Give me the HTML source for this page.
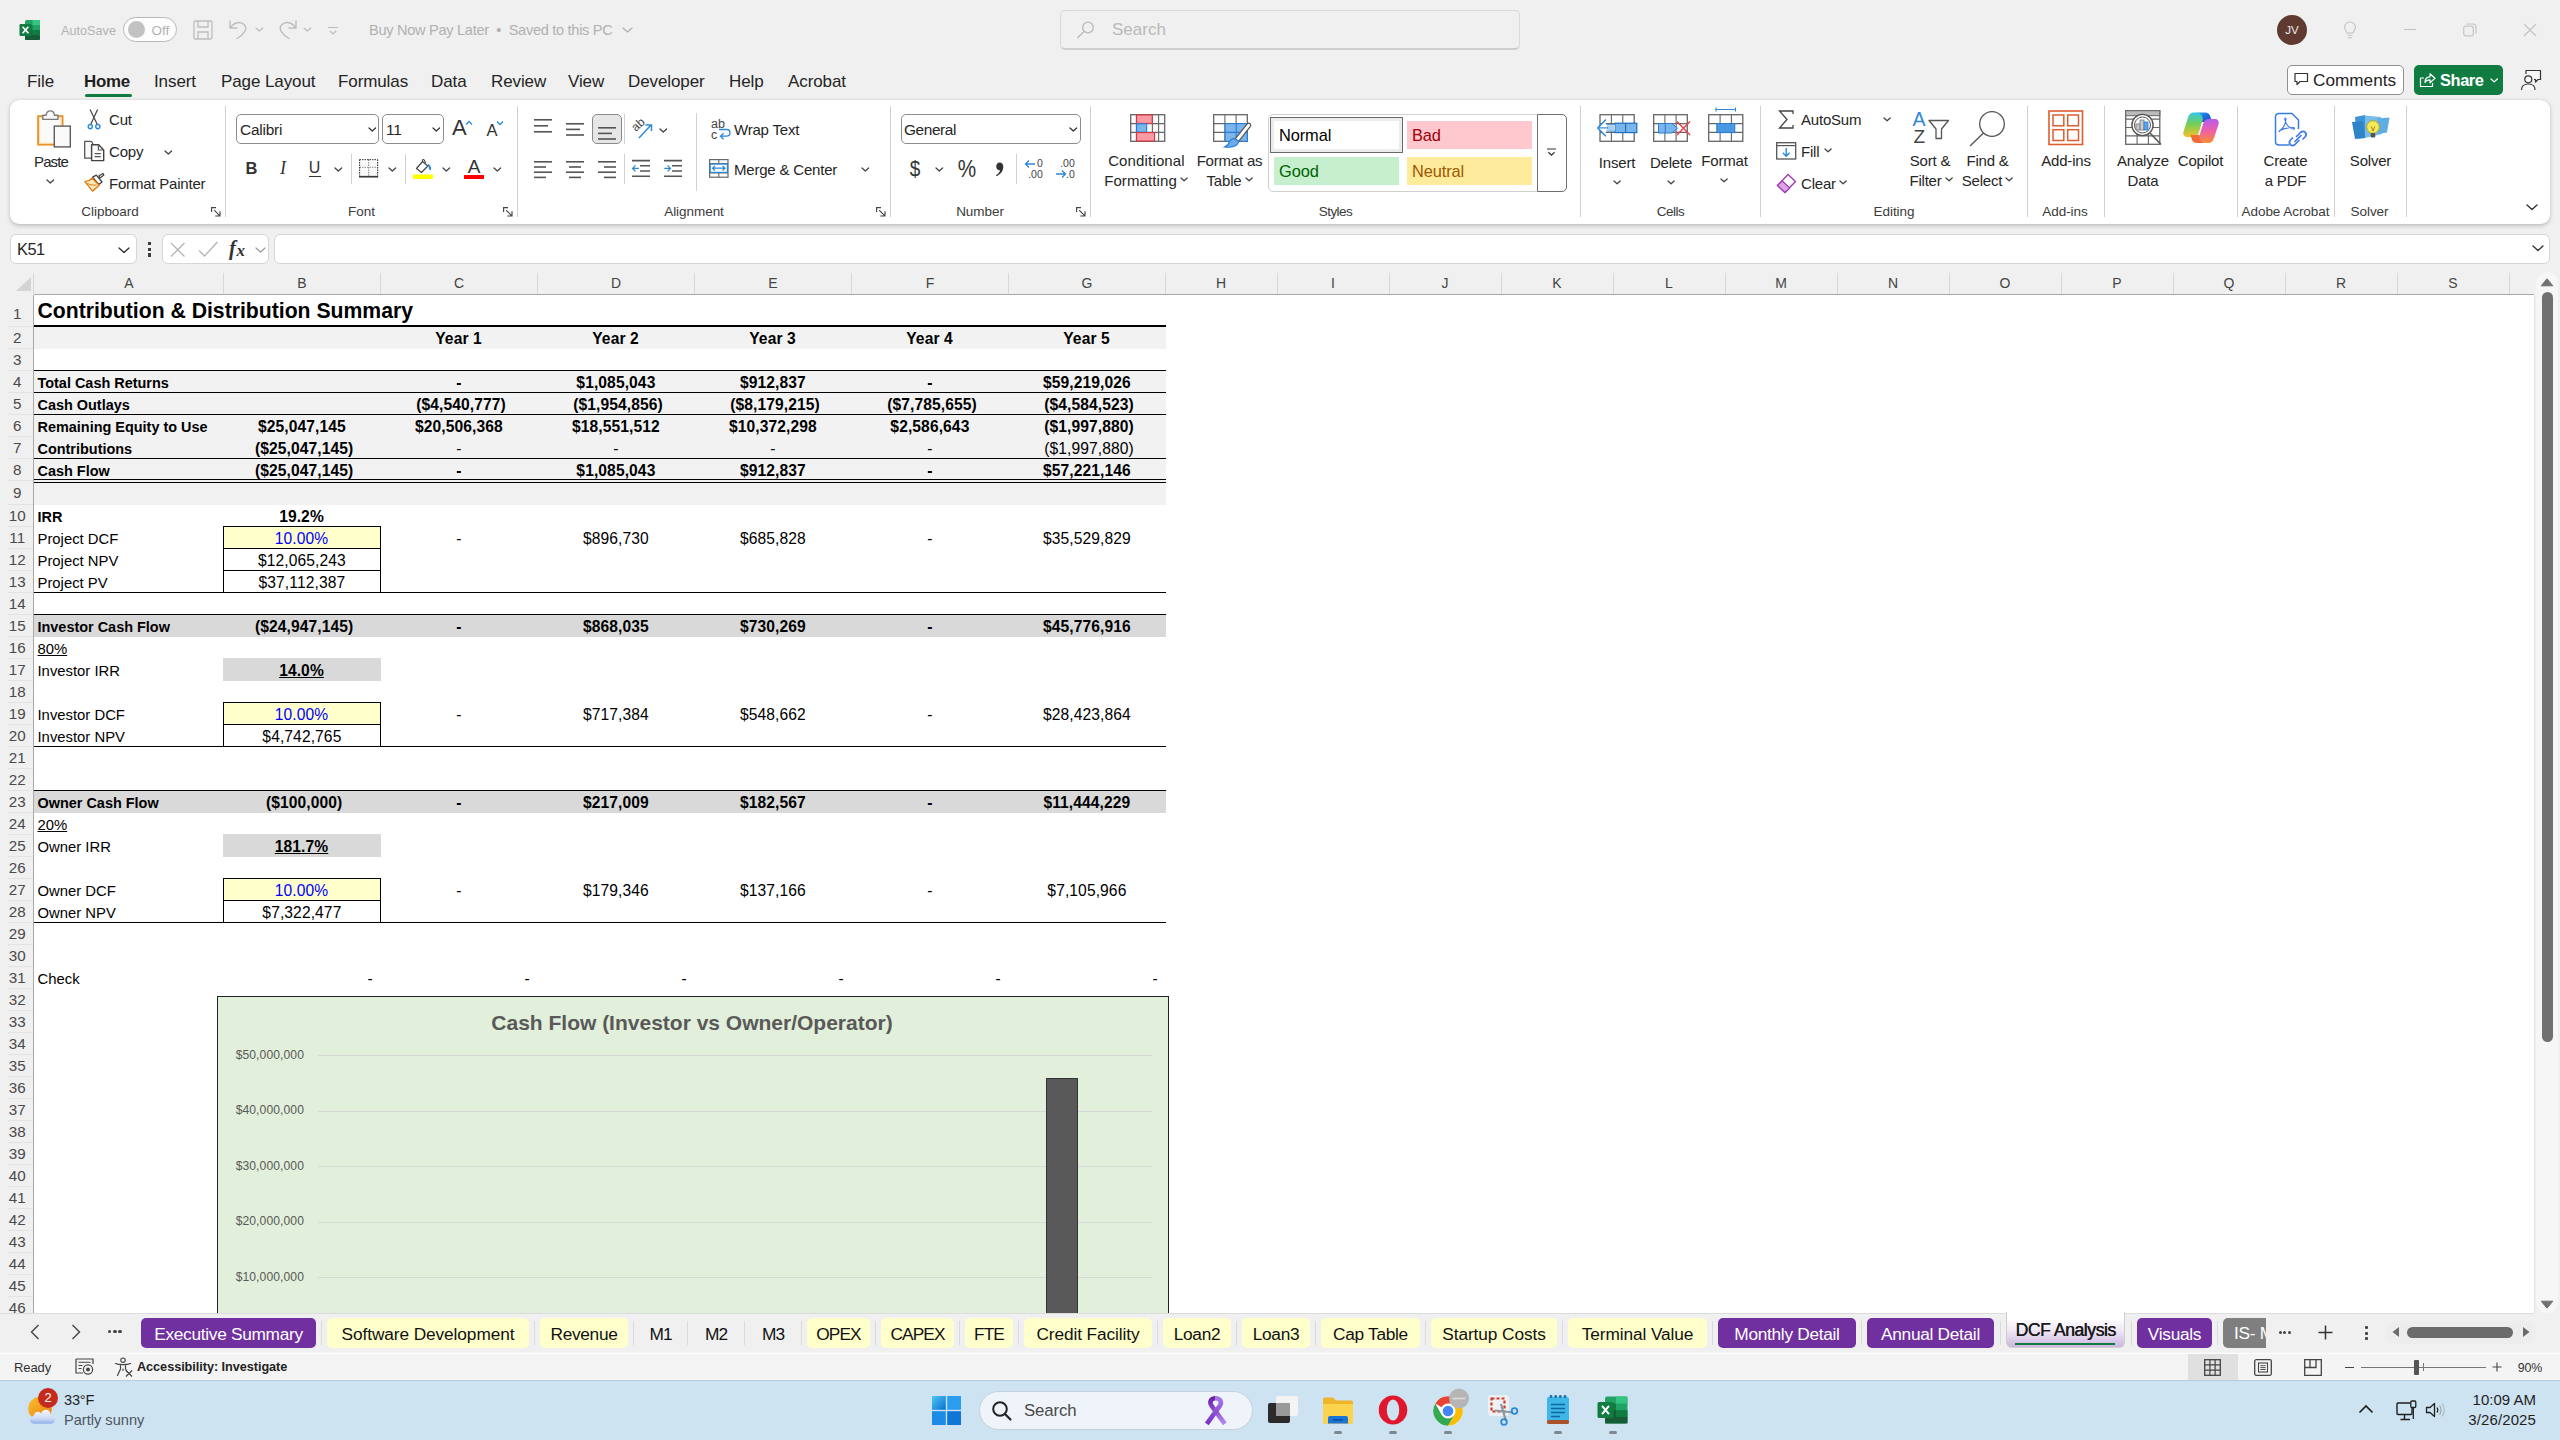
<!DOCTYPE html>
<html><head><meta charset="utf-8"><title>Excel</title>
<style>
html,body{margin:0;padding:0;}
body{width:2560px;height:1440px;overflow:hidden;background:#f0f0f0;font-family:"Liberation Sans",sans-serif;position:relative;}
body div,body svg{position:absolute;}
svg{overflow:visible;}
</style></head><body>
<div style="left:0px;top:272px;width:2534px;height:1041px;background:#fff;"></div>
<div style="left:0px;top:272px;width:2534px;height:22px;background:#f0f0f0;"></div>
<div style="left:34px;top:294px;width:2500px;height:1px;background:#a9a9a9;"></div>
<svg style="left:14px;top:276px;" width="18" height="16" viewBox="0 0 18 16"><path d="M17 1V15H2Z" fill="#d4d4d4"/></svg>
<div style="left:33px;top:273px;width:1px;height:21px;background:#d6d6d6;"></div>
<div style="top:273.3px;height:20px;line-height:20px;font-size:15.5px;color:#444;white-space:nowrap;left:98.5px;width:60px;text-align:center;transform:scaleX(.9);">A</div>
<div style="left:223px;top:273px;width:1px;height:21px;background:#d8d8d8;"></div>
<div style="top:273.3px;height:20px;line-height:20px;font-size:15.5px;color:#444;white-space:nowrap;left:271.5px;width:60px;text-align:center;transform:scaleX(.9);">B</div>
<div style="left:380px;top:273px;width:1px;height:21px;background:#d8d8d8;"></div>
<div style="top:273.3px;height:20px;line-height:20px;font-size:15.5px;color:#444;white-space:nowrap;left:428.5px;width:60px;text-align:center;transform:scaleX(.9);">C</div>
<div style="left:537px;top:273px;width:1px;height:21px;background:#d8d8d8;"></div>
<div style="top:273.3px;height:20px;line-height:20px;font-size:15.5px;color:#444;white-space:nowrap;left:585.5px;width:60px;text-align:center;transform:scaleX(.9);">D</div>
<div style="left:694px;top:273px;width:1px;height:21px;background:#d8d8d8;"></div>
<div style="top:273.3px;height:20px;line-height:20px;font-size:15.5px;color:#444;white-space:nowrap;left:742.5px;width:60px;text-align:center;transform:scaleX(.9);">E</div>
<div style="left:851px;top:273px;width:1px;height:21px;background:#d8d8d8;"></div>
<div style="top:273.3px;height:20px;line-height:20px;font-size:15.5px;color:#444;white-space:nowrap;left:899.5px;width:60px;text-align:center;transform:scaleX(.9);">F</div>
<div style="left:1008px;top:273px;width:1px;height:21px;background:#d8d8d8;"></div>
<div style="top:273.3px;height:20px;line-height:20px;font-size:15.5px;color:#444;white-space:nowrap;left:1056.5px;width:60px;text-align:center;transform:scaleX(.9);">G</div>
<div style="left:1165px;top:273px;width:1px;height:21px;background:#d8d8d8;"></div>
<div style="top:273.3px;height:20px;line-height:20px;font-size:15.5px;color:#444;white-space:nowrap;left:1191.0px;width:60px;text-align:center;transform:scaleX(.9);">H</div>
<div style="left:1277px;top:273px;width:1px;height:21px;background:#d8d8d8;"></div>
<div style="top:273.3px;height:20px;line-height:20px;font-size:15.5px;color:#444;white-space:nowrap;left:1303.0px;width:60px;text-align:center;transform:scaleX(.9);">I</div>
<div style="left:1389px;top:273px;width:1px;height:21px;background:#d8d8d8;"></div>
<div style="top:273.3px;height:20px;line-height:20px;font-size:15.5px;color:#444;white-space:nowrap;left:1415.0px;width:60px;text-align:center;transform:scaleX(.9);">J</div>
<div style="left:1501px;top:273px;width:1px;height:21px;background:#d8d8d8;"></div>
<div style="top:273.3px;height:20px;line-height:20px;font-size:15.5px;color:#444;white-space:nowrap;left:1527.0px;width:60px;text-align:center;transform:scaleX(.9);">K</div>
<div style="left:1613px;top:273px;width:1px;height:21px;background:#d8d8d8;"></div>
<div style="top:273.3px;height:20px;line-height:20px;font-size:15.5px;color:#444;white-space:nowrap;left:1639.0px;width:60px;text-align:center;transform:scaleX(.9);">L</div>
<div style="left:1725px;top:273px;width:1px;height:21px;background:#d8d8d8;"></div>
<div style="top:273.3px;height:20px;line-height:20px;font-size:15.5px;color:#444;white-space:nowrap;left:1751.0px;width:60px;text-align:center;transform:scaleX(.9);">M</div>
<div style="left:1837px;top:273px;width:1px;height:21px;background:#d8d8d8;"></div>
<div style="top:273.3px;height:20px;line-height:20px;font-size:15.5px;color:#444;white-space:nowrap;left:1863.0px;width:60px;text-align:center;transform:scaleX(.9);">N</div>
<div style="left:1949px;top:273px;width:1px;height:21px;background:#d8d8d8;"></div>
<div style="top:273.3px;height:20px;line-height:20px;font-size:15.5px;color:#444;white-space:nowrap;left:1975.0px;width:60px;text-align:center;transform:scaleX(.9);">O</div>
<div style="left:2061px;top:273px;width:1px;height:21px;background:#d8d8d8;"></div>
<div style="top:273.3px;height:20px;line-height:20px;font-size:15.5px;color:#444;white-space:nowrap;left:2087.0px;width:60px;text-align:center;transform:scaleX(.9);">P</div>
<div style="left:2173px;top:273px;width:1px;height:21px;background:#d8d8d8;"></div>
<div style="top:273.3px;height:20px;line-height:20px;font-size:15.5px;color:#444;white-space:nowrap;left:2199.0px;width:60px;text-align:center;transform:scaleX(.9);">Q</div>
<div style="left:2285px;top:273px;width:1px;height:21px;background:#d8d8d8;"></div>
<div style="top:273.3px;height:20px;line-height:20px;font-size:15.5px;color:#444;white-space:nowrap;left:2311.0px;width:60px;text-align:center;transform:scaleX(.9);">R</div>
<div style="left:2397px;top:273px;width:1px;height:21px;background:#d8d8d8;"></div>
<div style="top:273.3px;height:20px;line-height:20px;font-size:15.5px;color:#444;white-space:nowrap;left:2423.0px;width:60px;text-align:center;transform:scaleX(.9);">S</div>
<div style="left:2509px;top:273px;width:1px;height:21px;background:#d8d8d8;"></div>
<div style="left:0px;top:294px;width:33px;height:1019px;background:#f0f0f0;"></div>
<div style="left:33px;top:295px;width:1px;height:1018px;background:#a9a9a9;"></div>
<div style="top:303.8px;height:20px;line-height:20px;font-size:15.2px;color:#4a4a4a;white-space:nowrap;letter-spacing:0.2px;left:-2.6999999999999993px;width:40px;text-align:center;">1</div>
<div style="left:8px;top:326px;width:25px;height:1px;background:#e3e3e3;"></div>
<div style="top:328.3px;height:20px;line-height:20px;font-size:15.2px;color:#4a4a4a;white-space:nowrap;letter-spacing:0.2px;left:-2.6999999999999993px;width:40px;text-align:center;">2</div>
<div style="left:8px;top:348px;width:25px;height:1px;background:#e3e3e3;"></div>
<div style="top:350.3px;height:20px;line-height:20px;font-size:15.2px;color:#4a4a4a;white-space:nowrap;letter-spacing:0.2px;left:-2.6999999999999993px;width:40px;text-align:center;">3</div>
<div style="left:8px;top:370px;width:25px;height:1px;background:#e3e3e3;"></div>
<div style="top:372.3px;height:20px;line-height:20px;font-size:15.2px;color:#4a4a4a;white-space:nowrap;letter-spacing:0.2px;left:-2.6999999999999993px;width:40px;text-align:center;">4</div>
<div style="left:8px;top:392px;width:25px;height:1px;background:#e3e3e3;"></div>
<div style="top:394.3px;height:20px;line-height:20px;font-size:15.2px;color:#4a4a4a;white-space:nowrap;letter-spacing:0.2px;left:-2.6999999999999993px;width:40px;text-align:center;">5</div>
<div style="left:8px;top:414px;width:25px;height:1px;background:#e3e3e3;"></div>
<div style="top:416.3px;height:20px;line-height:20px;font-size:15.2px;color:#4a4a4a;white-space:nowrap;letter-spacing:0.2px;left:-2.6999999999999993px;width:40px;text-align:center;">6</div>
<div style="left:8px;top:436px;width:25px;height:1px;background:#e3e3e3;"></div>
<div style="top:438.3px;height:20px;line-height:20px;font-size:15.2px;color:#4a4a4a;white-space:nowrap;letter-spacing:0.2px;left:-2.6999999999999993px;width:40px;text-align:center;">7</div>
<div style="left:8px;top:458px;width:25px;height:1px;background:#e3e3e3;"></div>
<div style="top:460.3px;height:20px;line-height:20px;font-size:15.2px;color:#4a4a4a;white-space:nowrap;letter-spacing:0.2px;left:-2.6999999999999993px;width:40px;text-align:center;">8</div>
<div style="left:8px;top:480px;width:25px;height:1px;background:#e3e3e3;"></div>
<div style="top:483.3px;height:20px;line-height:20px;font-size:15.2px;color:#4a4a4a;white-space:nowrap;letter-spacing:0.2px;left:-2.6999999999999993px;width:40px;text-align:center;">9</div>
<div style="left:8px;top:504px;width:25px;height:1px;background:#e3e3e3;"></div>
<div style="top:506.3px;height:20px;line-height:20px;font-size:15.2px;color:#4a4a4a;white-space:nowrap;letter-spacing:0.2px;left:-2.6999999999999993px;width:40px;text-align:center;">10</div>
<div style="left:8px;top:526px;width:25px;height:1px;background:#e3e3e3;"></div>
<div style="top:528.3px;height:20px;line-height:20px;font-size:15.2px;color:#4a4a4a;white-space:nowrap;letter-spacing:0.2px;left:-2.6999999999999993px;width:40px;text-align:center;">11</div>
<div style="left:8px;top:548px;width:25px;height:1px;background:#e3e3e3;"></div>
<div style="top:550.3px;height:20px;line-height:20px;font-size:15.2px;color:#4a4a4a;white-space:nowrap;letter-spacing:0.2px;left:-2.6999999999999993px;width:40px;text-align:center;">12</div>
<div style="left:8px;top:570px;width:25px;height:1px;background:#e3e3e3;"></div>
<div style="top:572.3px;height:20px;line-height:20px;font-size:15.2px;color:#4a4a4a;white-space:nowrap;letter-spacing:0.2px;left:-2.6999999999999993px;width:40px;text-align:center;">13</div>
<div style="left:8px;top:592px;width:25px;height:1px;background:#e3e3e3;"></div>
<div style="top:594.3px;height:20px;line-height:20px;font-size:15.2px;color:#4a4a4a;white-space:nowrap;letter-spacing:0.2px;left:-2.6999999999999993px;width:40px;text-align:center;">14</div>
<div style="left:8px;top:614px;width:25px;height:1px;background:#e3e3e3;"></div>
<div style="top:616.3px;height:20px;line-height:20px;font-size:15.2px;color:#4a4a4a;white-space:nowrap;letter-spacing:0.2px;left:-2.6999999999999993px;width:40px;text-align:center;">15</div>
<div style="left:8px;top:636px;width:25px;height:1px;background:#e3e3e3;"></div>
<div style="top:638.3px;height:20px;line-height:20px;font-size:15.2px;color:#4a4a4a;white-space:nowrap;letter-spacing:0.2px;left:-2.6999999999999993px;width:40px;text-align:center;">16</div>
<div style="left:8px;top:658px;width:25px;height:1px;background:#e3e3e3;"></div>
<div style="top:660.3px;height:20px;line-height:20px;font-size:15.2px;color:#4a4a4a;white-space:nowrap;letter-spacing:0.2px;left:-2.6999999999999993px;width:40px;text-align:center;">17</div>
<div style="left:8px;top:680px;width:25px;height:1px;background:#e3e3e3;"></div>
<div style="top:682.3px;height:20px;line-height:20px;font-size:15.2px;color:#4a4a4a;white-space:nowrap;letter-spacing:0.2px;left:-2.6999999999999993px;width:40px;text-align:center;">18</div>
<div style="left:8px;top:702px;width:25px;height:1px;background:#e3e3e3;"></div>
<div style="top:704.3px;height:20px;line-height:20px;font-size:15.2px;color:#4a4a4a;white-space:nowrap;letter-spacing:0.2px;left:-2.6999999999999993px;width:40px;text-align:center;">19</div>
<div style="left:8px;top:724px;width:25px;height:1px;background:#e3e3e3;"></div>
<div style="top:726.3px;height:20px;line-height:20px;font-size:15.2px;color:#4a4a4a;white-space:nowrap;letter-spacing:0.2px;left:-2.6999999999999993px;width:40px;text-align:center;">20</div>
<div style="left:8px;top:746px;width:25px;height:1px;background:#e3e3e3;"></div>
<div style="top:748.3px;height:20px;line-height:20px;font-size:15.2px;color:#4a4a4a;white-space:nowrap;letter-spacing:0.2px;left:-2.6999999999999993px;width:40px;text-align:center;">21</div>
<div style="left:8px;top:768px;width:25px;height:1px;background:#e3e3e3;"></div>
<div style="top:770.3px;height:20px;line-height:20px;font-size:15.2px;color:#4a4a4a;white-space:nowrap;letter-spacing:0.2px;left:-2.6999999999999993px;width:40px;text-align:center;">22</div>
<div style="left:8px;top:790px;width:25px;height:1px;background:#e3e3e3;"></div>
<div style="top:792.3px;height:20px;line-height:20px;font-size:15.2px;color:#4a4a4a;white-space:nowrap;letter-spacing:0.2px;left:-2.6999999999999993px;width:40px;text-align:center;">23</div>
<div style="left:8px;top:812px;width:25px;height:1px;background:#e3e3e3;"></div>
<div style="top:814.3px;height:20px;line-height:20px;font-size:15.2px;color:#4a4a4a;white-space:nowrap;letter-spacing:0.2px;left:-2.6999999999999993px;width:40px;text-align:center;">24</div>
<div style="left:8px;top:834px;width:25px;height:1px;background:#e3e3e3;"></div>
<div style="top:836.3px;height:20px;line-height:20px;font-size:15.2px;color:#4a4a4a;white-space:nowrap;letter-spacing:0.2px;left:-2.6999999999999993px;width:40px;text-align:center;">25</div>
<div style="left:8px;top:856px;width:25px;height:1px;background:#e3e3e3;"></div>
<div style="top:858.3px;height:20px;line-height:20px;font-size:15.2px;color:#4a4a4a;white-space:nowrap;letter-spacing:0.2px;left:-2.6999999999999993px;width:40px;text-align:center;">26</div>
<div style="left:8px;top:878px;width:25px;height:1px;background:#e3e3e3;"></div>
<div style="top:880.3px;height:20px;line-height:20px;font-size:15.2px;color:#4a4a4a;white-space:nowrap;letter-spacing:0.2px;left:-2.6999999999999993px;width:40px;text-align:center;">27</div>
<div style="left:8px;top:900px;width:25px;height:1px;background:#e3e3e3;"></div>
<div style="top:902.3px;height:20px;line-height:20px;font-size:15.2px;color:#4a4a4a;white-space:nowrap;letter-spacing:0.2px;left:-2.6999999999999993px;width:40px;text-align:center;">28</div>
<div style="left:8px;top:922px;width:25px;height:1px;background:#e3e3e3;"></div>
<div style="top:924.3px;height:20px;line-height:20px;font-size:15.2px;color:#4a4a4a;white-space:nowrap;letter-spacing:0.2px;left:-2.6999999999999993px;width:40px;text-align:center;">29</div>
<div style="left:8px;top:944px;width:25px;height:1px;background:#e3e3e3;"></div>
<div style="top:946.3px;height:20px;line-height:20px;font-size:15.2px;color:#4a4a4a;white-space:nowrap;letter-spacing:0.2px;left:-2.6999999999999993px;width:40px;text-align:center;">30</div>
<div style="left:8px;top:966px;width:25px;height:1px;background:#e3e3e3;"></div>
<div style="top:968.3px;height:20px;line-height:20px;font-size:15.2px;color:#4a4a4a;white-space:nowrap;letter-spacing:0.2px;left:-2.6999999999999993px;width:40px;text-align:center;">31</div>
<div style="left:8px;top:988px;width:25px;height:1px;background:#e3e3e3;"></div>
<div style="top:990.3px;height:20px;line-height:20px;font-size:15.2px;color:#4a4a4a;white-space:nowrap;letter-spacing:0.2px;left:-2.6999999999999993px;width:40px;text-align:center;">32</div>
<div style="left:8px;top:1010px;width:25px;height:1px;background:#e3e3e3;"></div>
<div style="top:1012.3px;height:20px;line-height:20px;font-size:15.2px;color:#4a4a4a;white-space:nowrap;letter-spacing:0.2px;left:-2.6999999999999993px;width:40px;text-align:center;">33</div>
<div style="left:8px;top:1032px;width:25px;height:1px;background:#e3e3e3;"></div>
<div style="top:1034.3px;height:20px;line-height:20px;font-size:15.2px;color:#4a4a4a;white-space:nowrap;letter-spacing:0.2px;left:-2.6999999999999993px;width:40px;text-align:center;">34</div>
<div style="left:8px;top:1054px;width:25px;height:1px;background:#e3e3e3;"></div>
<div style="top:1056.3px;height:20px;line-height:20px;font-size:15.2px;color:#4a4a4a;white-space:nowrap;letter-spacing:0.2px;left:-2.6999999999999993px;width:40px;text-align:center;">35</div>
<div style="left:8px;top:1076px;width:25px;height:1px;background:#e3e3e3;"></div>
<div style="top:1078.3px;height:20px;line-height:20px;font-size:15.2px;color:#4a4a4a;white-space:nowrap;letter-spacing:0.2px;left:-2.6999999999999993px;width:40px;text-align:center;">36</div>
<div style="left:8px;top:1098px;width:25px;height:1px;background:#e3e3e3;"></div>
<div style="top:1100.3px;height:20px;line-height:20px;font-size:15.2px;color:#4a4a4a;white-space:nowrap;letter-spacing:0.2px;left:-2.6999999999999993px;width:40px;text-align:center;">37</div>
<div style="left:8px;top:1120px;width:25px;height:1px;background:#e3e3e3;"></div>
<div style="top:1122.3px;height:20px;line-height:20px;font-size:15.2px;color:#4a4a4a;white-space:nowrap;letter-spacing:0.2px;left:-2.6999999999999993px;width:40px;text-align:center;">38</div>
<div style="left:8px;top:1142px;width:25px;height:1px;background:#e3e3e3;"></div>
<div style="top:1144.3px;height:20px;line-height:20px;font-size:15.2px;color:#4a4a4a;white-space:nowrap;letter-spacing:0.2px;left:-2.6999999999999993px;width:40px;text-align:center;">39</div>
<div style="left:8px;top:1164px;width:25px;height:1px;background:#e3e3e3;"></div>
<div style="top:1166.3px;height:20px;line-height:20px;font-size:15.2px;color:#4a4a4a;white-space:nowrap;letter-spacing:0.2px;left:-2.6999999999999993px;width:40px;text-align:center;">40</div>
<div style="left:8px;top:1186px;width:25px;height:1px;background:#e3e3e3;"></div>
<div style="top:1188.3px;height:20px;line-height:20px;font-size:15.2px;color:#4a4a4a;white-space:nowrap;letter-spacing:0.2px;left:-2.6999999999999993px;width:40px;text-align:center;">41</div>
<div style="left:8px;top:1208px;width:25px;height:1px;background:#e3e3e3;"></div>
<div style="top:1210.3px;height:20px;line-height:20px;font-size:15.2px;color:#4a4a4a;white-space:nowrap;letter-spacing:0.2px;left:-2.6999999999999993px;width:40px;text-align:center;">42</div>
<div style="left:8px;top:1230px;width:25px;height:1px;background:#e3e3e3;"></div>
<div style="top:1232.3px;height:20px;line-height:20px;font-size:15.2px;color:#4a4a4a;white-space:nowrap;letter-spacing:0.2px;left:-2.6999999999999993px;width:40px;text-align:center;">43</div>
<div style="left:8px;top:1252px;width:25px;height:1px;background:#e3e3e3;"></div>
<div style="top:1254.3px;height:20px;line-height:20px;font-size:15.2px;color:#4a4a4a;white-space:nowrap;letter-spacing:0.2px;left:-2.6999999999999993px;width:40px;text-align:center;">44</div>
<div style="left:8px;top:1274px;width:25px;height:1px;background:#e3e3e3;"></div>
<div style="top:1276.3px;height:20px;line-height:20px;font-size:15.2px;color:#4a4a4a;white-space:nowrap;letter-spacing:0.2px;left:-2.6999999999999993px;width:40px;text-align:center;">45</div>
<div style="left:8px;top:1296px;width:25px;height:1px;background:#e3e3e3;"></div>
<div style="top:1298.3px;height:20px;line-height:20px;font-size:15.2px;color:#4a4a4a;white-space:nowrap;letter-spacing:0.2px;left:-2.6999999999999993px;width:40px;text-align:center;">46</div>
<div style="left:2534px;top:272px;width:26px;height:1041px;background:#f0f0f0;"></div>
<div style="left:2534px;top:295px;width:1px;height:1018px;background:#e4e4e4;"></div>
<div style="left:2536px;top:272px;width:22px;height:1041px;background:#f6f6f6;border-radius:11px;"></div>
<svg style="left:2540px;top:277px;" width="14" height="10" viewBox="0 0 14 10"><path d="M1.2 8.8L7 1.8L12.8 8.8Z" fill="#707070" stroke="#707070" stroke-width="1" stroke-linejoin="round"/></svg>
<svg style="left:2540px;top:1300px;" width="14" height="10" viewBox="0 0 14 10"><path d="M1.2 1.2L7 8.2L12.8 1.2Z" fill="#707070" stroke="#707070" stroke-width="1" stroke-linejoin="round"/></svg>
<div style="left:2542px;top:292px;width:11px;height:750px;background:#707070;border-radius:5.5px;"></div>
<div style="left:34px;top:326px;width:1132px;height:23px;background:#f2f2f2;"></div>
<div style="left:34px;top:370px;width:1132px;height:135px;background:#f2f2f2;"></div>
<div style="left:34px;top:614px;width:1132px;height:23px;background:#d9d9d9;"></div>
<div style="left:34px;top:790px;width:1132px;height:23px;background:#d9d9d9;"></div>
<div style="left:223px;top:658px;width:158px;height:23px;background:#d9d9d9;"></div>
<div style="left:223px;top:834px;width:158px;height:23px;background:#d9d9d9;"></div>
<div style="left:223px;top:526px;width:158px;height:23px;background:#ffffcc;"></div>
<div style="left:223px;top:702px;width:158px;height:23px;background:#ffffcc;"></div>
<div style="left:223px;top:878px;width:158px;height:23px;background:#ffffcc;"></div>
<div style="left:34px;top:325px;width:1132px;height:2px;background:#000;"></div>
<div style="left:34px;top:370px;width:1132px;height:1px;background:#000;"></div>
<div style="left:34px;top:392px;width:1132px;height:1px;background:#000;"></div>
<div style="left:34px;top:414px;width:1132px;height:1px;background:#000;"></div>
<div style="left:34px;top:458px;width:1132px;height:1px;background:#000;"></div>
<div style="left:34px;top:479px;width:1132px;height:1px;background:#000;"></div>
<div style="left:34px;top:482px;width:1132px;height:1px;background:#000;"></div>
<div style="left:34px;top:592px;width:1132px;height:1px;background:#000;"></div>
<div style="left:34px;top:614px;width:1132px;height:1px;background:#000;"></div>
<div style="left:34px;top:746px;width:1132px;height:1px;background:#000;"></div>
<div style="left:34px;top:790px;width:1132px;height:1px;background:#000;"></div>
<div style="left:34px;top:922px;width:1132px;height:1px;background:#000;"></div>
<div style="left:223px;top:526px;width:158px;height:67px;border:1px solid #000;box-sizing:border-box;"></div>
<div style="left:223px;top:548px;width:158px;height:1px;background:#000;"></div>
<div style="left:223px;top:570px;width:158px;height:1px;background:#000;"></div>
<div style="left:223px;top:702px;width:158px;height:45px;border:1px solid #000;box-sizing:border-box;"></div>
<div style="left:223px;top:724px;width:158px;height:1px;background:#000;"></div>
<div style="left:223px;top:878px;width:158px;height:45px;border:1px solid #000;box-sizing:border-box;"></div>
<div style="left:223px;top:900px;width:158px;height:1px;background:#000;"></div>
<div style="top:297.0px;height:28px;line-height:28px;font-size:21.2px;color:#000;white-space:nowrap;font-weight:700;left:37.5px;">Contribution &amp; Distribution Summary</div>
<div style="top:329.0px;height:20px;line-height:20px;font-size:15.6px;color:#000;white-space:nowrap;font-weight:700;letter-spacing:0.1px;left:158.5px;width:600px;text-align:center;">Year 1</div>
<div style="top:329.0px;height:20px;line-height:20px;font-size:15.6px;color:#000;white-space:nowrap;font-weight:700;letter-spacing:0.1px;left:315.5px;width:600px;text-align:center;">Year 2</div>
<div style="top:329.0px;height:20px;line-height:20px;font-size:15.6px;color:#000;white-space:nowrap;font-weight:700;letter-spacing:0.1px;left:472.5px;width:600px;text-align:center;">Year 3</div>
<div style="top:329.0px;height:20px;line-height:20px;font-size:15.6px;color:#000;white-space:nowrap;font-weight:700;letter-spacing:0.1px;left:629.5px;width:600px;text-align:center;">Year 4</div>
<div style="top:329.0px;height:20px;line-height:20px;font-size:15.6px;color:#000;white-space:nowrap;font-weight:700;letter-spacing:0.1px;left:786.5px;width:600px;text-align:center;">Year 5</div>
<div style="top:373.5px;height:19px;line-height:19px;font-size:14.45px;color:#000;white-space:nowrap;font-weight:700;left:37.5px;">Total Cash Returns</div>
<div style="top:373.0px;height:20px;line-height:20px;font-size:15.6px;color:#000;white-space:nowrap;font-weight:700;letter-spacing:0.1px;left:159.0px;width:600px;text-align:center;">-</div>
<div style="top:373.0px;height:20px;line-height:20px;font-size:15.6px;color:#000;white-space:nowrap;font-weight:700;letter-spacing:0.1px;left:315.9px;width:600px;text-align:center;">$1,085,043</div>
<div style="top:373.0px;height:20px;line-height:20px;font-size:15.6px;color:#000;white-space:nowrap;font-weight:700;letter-spacing:0.1px;left:472.9px;width:600px;text-align:center;">$912,837</div>
<div style="top:373.0px;height:20px;line-height:20px;font-size:15.6px;color:#000;white-space:nowrap;font-weight:700;letter-spacing:0.1px;left:630.0px;width:600px;text-align:center;">-</div>
<div style="top:373.0px;height:20px;line-height:20px;font-size:15.6px;color:#000;white-space:nowrap;font-weight:700;letter-spacing:0.1px;left:786.9000000000001px;width:600px;text-align:center;">$59,219,026</div>
<div style="top:395.5px;height:19px;line-height:19px;font-size:14.45px;color:#000;white-space:nowrap;font-weight:700;left:37.5px;">Cash Outlays</div>
<div style="top:395.0px;height:20px;line-height:20px;font-size:15.6px;color:#000;white-space:nowrap;font-weight:700;letter-spacing:0.1px;left:161.10000000000002px;width:600px;text-align:center;">($4,540,777)</div>
<div style="top:395.0px;height:20px;line-height:20px;font-size:15.6px;color:#000;white-space:nowrap;font-weight:700;letter-spacing:0.1px;left:318.1px;width:600px;text-align:center;">($1,954,856)</div>
<div style="top:395.0px;height:20px;line-height:20px;font-size:15.6px;color:#000;white-space:nowrap;font-weight:700;letter-spacing:0.1px;left:475.1px;width:600px;text-align:center;">($8,179,215)</div>
<div style="top:395.0px;height:20px;line-height:20px;font-size:15.6px;color:#000;white-space:nowrap;font-weight:700;letter-spacing:0.1px;left:632.1px;width:600px;text-align:center;">($7,785,655)</div>
<div style="top:395.0px;height:20px;line-height:20px;font-size:15.6px;color:#000;white-space:nowrap;font-weight:700;letter-spacing:0.1px;left:789.0999999999999px;width:600px;text-align:center;">($4,584,523)</div>
<div style="top:417.5px;height:19px;line-height:19px;font-size:14.45px;color:#000;white-space:nowrap;font-weight:700;left:37.5px;">Remaining Equity to Use</div>
<div style="top:417.0px;height:20px;line-height:20px;font-size:15.6px;color:#000;white-space:nowrap;font-weight:700;letter-spacing:0.1px;left:1.8999999999999773px;width:600px;text-align:center;">$25,047,145</div>
<div style="top:417.0px;height:20px;line-height:20px;font-size:15.6px;color:#000;white-space:nowrap;font-weight:700;letter-spacing:0.1px;left:158.89999999999998px;width:600px;text-align:center;">$20,506,368</div>
<div style="top:417.0px;height:20px;line-height:20px;font-size:15.6px;color:#000;white-space:nowrap;font-weight:700;letter-spacing:0.1px;left:315.9px;width:600px;text-align:center;">$18,551,512</div>
<div style="top:417.0px;height:20px;line-height:20px;font-size:15.6px;color:#000;white-space:nowrap;font-weight:700;letter-spacing:0.1px;left:472.9px;width:600px;text-align:center;">$10,372,298</div>
<div style="top:417.0px;height:20px;line-height:20px;font-size:15.6px;color:#000;white-space:nowrap;font-weight:700;letter-spacing:0.1px;left:629.9px;width:600px;text-align:center;">$2,586,643</div>
<div style="top:417.0px;height:20px;line-height:20px;font-size:15.6px;color:#000;white-space:nowrap;font-weight:700;letter-spacing:0.1px;left:789.0999999999999px;width:600px;text-align:center;">($1,997,880)</div>
<div style="top:439.5px;height:19px;line-height:19px;font-size:14.45px;color:#000;white-space:nowrap;font-weight:700;left:37.5px;">Contributions</div>
<div style="top:439.0px;height:20px;line-height:20px;font-size:15.6px;color:#000;white-space:nowrap;font-weight:700;letter-spacing:0.1px;left:4.100000000000023px;width:600px;text-align:center;">($25,047,145)</div>
<div style="top:439.0px;height:20px;line-height:20px;font-size:15.6px;color:#000;white-space:nowrap;letter-spacing:0.1px;left:159.0px;width:600px;text-align:center;">-</div>
<div style="top:439.0px;height:20px;line-height:20px;font-size:15.6px;color:#000;white-space:nowrap;letter-spacing:0.1px;left:316.0px;width:600px;text-align:center;">-</div>
<div style="top:439.0px;height:20px;line-height:20px;font-size:15.6px;color:#000;white-space:nowrap;letter-spacing:0.1px;left:473.0px;width:600px;text-align:center;">-</div>
<div style="top:439.0px;height:20px;line-height:20px;font-size:15.6px;color:#000;white-space:nowrap;letter-spacing:0.1px;left:630.0px;width:600px;text-align:center;">-</div>
<div style="top:439.0px;height:20px;line-height:20px;font-size:15.6px;color:#000;white-space:nowrap;letter-spacing:0.1px;left:789.0999999999999px;width:600px;text-align:center;">($1,997,880)</div>
<div style="top:461.5px;height:19px;line-height:19px;font-size:14.45px;color:#000;white-space:nowrap;font-weight:700;left:37.5px;">Cash Flow</div>
<div style="top:461.0px;height:20px;line-height:20px;font-size:15.6px;color:#000;white-space:nowrap;font-weight:700;letter-spacing:0.1px;left:4.100000000000023px;width:600px;text-align:center;">($25,047,145)</div>
<div style="top:461.0px;height:20px;line-height:20px;font-size:15.6px;color:#000;white-space:nowrap;font-weight:700;letter-spacing:0.1px;left:159.0px;width:600px;text-align:center;">-</div>
<div style="top:461.0px;height:20px;line-height:20px;font-size:15.6px;color:#000;white-space:nowrap;font-weight:700;letter-spacing:0.1px;left:315.9px;width:600px;text-align:center;">$1,085,043</div>
<div style="top:461.0px;height:20px;line-height:20px;font-size:15.6px;color:#000;white-space:nowrap;font-weight:700;letter-spacing:0.1px;left:472.9px;width:600px;text-align:center;">$912,837</div>
<div style="top:461.0px;height:20px;line-height:20px;font-size:15.6px;color:#000;white-space:nowrap;font-weight:700;letter-spacing:0.1px;left:630.0px;width:600px;text-align:center;">-</div>
<div style="top:461.0px;height:20px;line-height:20px;font-size:15.6px;color:#000;white-space:nowrap;font-weight:700;letter-spacing:0.1px;left:786.9000000000001px;width:600px;text-align:center;">$57,221,146</div>
<div style="top:507.5px;height:19px;line-height:19px;font-size:14.45px;color:#000;white-space:nowrap;font-weight:700;left:37.5px;">IRR</div>
<div style="top:507.0px;height:20px;line-height:20px;font-size:15.6px;color:#000;white-space:nowrap;font-weight:700;letter-spacing:0.1px;left:1.5px;width:600px;text-align:center;">19.2%</div>
<div style="top:529.5px;height:19px;line-height:19px;font-size:14.85px;color:#000;white-space:nowrap;left:37.5px;">Project DCF</div>
<div style="top:529.0px;height:20px;line-height:20px;font-size:15.6px;color:#0000ff;white-space:nowrap;letter-spacing:0.1px;left:1.5px;width:600px;text-align:center;">10.00%</div>
<div style="top:529.0px;height:20px;line-height:20px;font-size:15.6px;color:#000;white-space:nowrap;letter-spacing:0.1px;left:159.0px;width:600px;text-align:center;">-</div>
<div style="top:529.0px;height:20px;line-height:20px;font-size:15.6px;color:#000;white-space:nowrap;letter-spacing:0.1px;left:315.9px;width:600px;text-align:center;">$896,730</div>
<div style="top:529.0px;height:20px;line-height:20px;font-size:15.6px;color:#000;white-space:nowrap;letter-spacing:0.1px;left:472.9px;width:600px;text-align:center;">$685,828</div>
<div style="top:529.0px;height:20px;line-height:20px;font-size:15.6px;color:#000;white-space:nowrap;letter-spacing:0.1px;left:630.0px;width:600px;text-align:center;">-</div>
<div style="top:529.0px;height:20px;line-height:20px;font-size:15.6px;color:#000;white-space:nowrap;letter-spacing:0.1px;left:786.9000000000001px;width:600px;text-align:center;">$35,529,829</div>
<div style="top:551.5px;height:19px;line-height:19px;font-size:14.85px;color:#000;white-space:nowrap;left:37.5px;">Project NPV</div>
<div style="top:551.0px;height:20px;line-height:20px;font-size:15.6px;color:#000;white-space:nowrap;letter-spacing:0.1px;left:1.8999999999999773px;width:600px;text-align:center;">$12,065,243</div>
<div style="top:573.5px;height:19px;line-height:19px;font-size:14.85px;color:#000;white-space:nowrap;left:37.5px;">Project PV</div>
<div style="top:573.0px;height:20px;line-height:20px;font-size:15.6px;color:#000;white-space:nowrap;letter-spacing:0.1px;left:1.8999999999999773px;width:600px;text-align:center;">$37,112,387</div>
<div style="top:617.5px;height:19px;line-height:19px;font-size:14.45px;color:#000;white-space:nowrap;font-weight:700;left:37.5px;">Investor Cash Flow</div>
<div style="top:617.0px;height:20px;line-height:20px;font-size:15.6px;color:#000;white-space:nowrap;font-weight:700;letter-spacing:0.1px;left:4.100000000000023px;width:600px;text-align:center;">($24,947,145)</div>
<div style="top:617.0px;height:20px;line-height:20px;font-size:15.6px;color:#000;white-space:nowrap;font-weight:700;letter-spacing:0.1px;left:159.0px;width:600px;text-align:center;">-</div>
<div style="top:617.0px;height:20px;line-height:20px;font-size:15.6px;color:#000;white-space:nowrap;font-weight:700;letter-spacing:0.1px;left:315.9px;width:600px;text-align:center;">$868,035</div>
<div style="top:617.0px;height:20px;line-height:20px;font-size:15.6px;color:#000;white-space:nowrap;font-weight:700;letter-spacing:0.1px;left:472.9px;width:600px;text-align:center;">$730,269</div>
<div style="top:617.0px;height:20px;line-height:20px;font-size:15.6px;color:#000;white-space:nowrap;font-weight:700;letter-spacing:0.1px;left:630.0px;width:600px;text-align:center;">-</div>
<div style="top:617.0px;height:20px;line-height:20px;font-size:15.6px;color:#000;white-space:nowrap;font-weight:700;letter-spacing:0.1px;left:786.9000000000001px;width:600px;text-align:center;">$45,776,916</div>
<div style="top:661.5px;height:19px;line-height:19px;font-size:14.85px;color:#000;white-space:nowrap;left:37.5px;">Investor IRR</div>
<div style="top:661.0px;height:20px;line-height:20px;font-size:15.6px;color:#000;white-space:nowrap;font-weight:700;letter-spacing:0.1px;left:1.5px;width:600px;text-align:center;text-decoration:underline;">14.0%</div>
<div style="top:705.5px;height:19px;line-height:19px;font-size:14.85px;color:#000;white-space:nowrap;left:37.5px;">Investor DCF</div>
<div style="top:705.0px;height:20px;line-height:20px;font-size:15.6px;color:#0000ff;white-space:nowrap;letter-spacing:0.1px;left:1.5px;width:600px;text-align:center;">10.00%</div>
<div style="top:705.0px;height:20px;line-height:20px;font-size:15.6px;color:#000;white-space:nowrap;letter-spacing:0.1px;left:159.0px;width:600px;text-align:center;">-</div>
<div style="top:705.0px;height:20px;line-height:20px;font-size:15.6px;color:#000;white-space:nowrap;letter-spacing:0.1px;left:315.9px;width:600px;text-align:center;">$717,384</div>
<div style="top:705.0px;height:20px;line-height:20px;font-size:15.6px;color:#000;white-space:nowrap;letter-spacing:0.1px;left:472.9px;width:600px;text-align:center;">$548,662</div>
<div style="top:705.0px;height:20px;line-height:20px;font-size:15.6px;color:#000;white-space:nowrap;letter-spacing:0.1px;left:630.0px;width:600px;text-align:center;">-</div>
<div style="top:705.0px;height:20px;line-height:20px;font-size:15.6px;color:#000;white-space:nowrap;letter-spacing:0.1px;left:786.9000000000001px;width:600px;text-align:center;">$28,423,864</div>
<div style="top:727.5px;height:19px;line-height:19px;font-size:14.85px;color:#000;white-space:nowrap;left:37.5px;">Investor NPV</div>
<div style="top:727.0px;height:20px;line-height:20px;font-size:15.6px;color:#000;white-space:nowrap;letter-spacing:0.1px;left:1.8999999999999773px;width:600px;text-align:center;">$4,742,765</div>
<div style="top:793.5px;height:19px;line-height:19px;font-size:14.45px;color:#000;white-space:nowrap;font-weight:700;left:37.5px;">Owner Cash Flow</div>
<div style="top:793.0px;height:20px;line-height:20px;font-size:15.6px;color:#000;white-space:nowrap;font-weight:700;letter-spacing:0.1px;left:4.100000000000023px;width:600px;text-align:center;">($100,000)</div>
<div style="top:793.0px;height:20px;line-height:20px;font-size:15.6px;color:#000;white-space:nowrap;font-weight:700;letter-spacing:0.1px;left:159.0px;width:600px;text-align:center;">-</div>
<div style="top:793.0px;height:20px;line-height:20px;font-size:15.6px;color:#000;white-space:nowrap;font-weight:700;letter-spacing:0.1px;left:315.9px;width:600px;text-align:center;">$217,009</div>
<div style="top:793.0px;height:20px;line-height:20px;font-size:15.6px;color:#000;white-space:nowrap;font-weight:700;letter-spacing:0.1px;left:472.9px;width:600px;text-align:center;">$182,567</div>
<div style="top:793.0px;height:20px;line-height:20px;font-size:15.6px;color:#000;white-space:nowrap;font-weight:700;letter-spacing:0.1px;left:630.0px;width:600px;text-align:center;">-</div>
<div style="top:793.0px;height:20px;line-height:20px;font-size:15.6px;color:#000;white-space:nowrap;font-weight:700;letter-spacing:0.1px;left:786.9000000000001px;width:600px;text-align:center;">$11,444,229</div>
<div style="top:837.5px;height:19px;line-height:19px;font-size:14.85px;color:#000;white-space:nowrap;left:37.5px;">Owner IRR</div>
<div style="top:837.0px;height:20px;line-height:20px;font-size:15.6px;color:#000;white-space:nowrap;font-weight:700;letter-spacing:0.1px;left:1.5px;width:600px;text-align:center;text-decoration:underline;">181.7%</div>
<div style="top:881.5px;height:19px;line-height:19px;font-size:14.85px;color:#000;white-space:nowrap;left:37.5px;">Owner DCF</div>
<div style="top:881.0px;height:20px;line-height:20px;font-size:15.6px;color:#0000ff;white-space:nowrap;letter-spacing:0.1px;left:1.5px;width:600px;text-align:center;">10.00%</div>
<div style="top:881.0px;height:20px;line-height:20px;font-size:15.6px;color:#000;white-space:nowrap;letter-spacing:0.1px;left:159.0px;width:600px;text-align:center;">-</div>
<div style="top:881.0px;height:20px;line-height:20px;font-size:15.6px;color:#000;white-space:nowrap;letter-spacing:0.1px;left:315.9px;width:600px;text-align:center;">$179,346</div>
<div style="top:881.0px;height:20px;line-height:20px;font-size:15.6px;color:#000;white-space:nowrap;letter-spacing:0.1px;left:472.9px;width:600px;text-align:center;">$137,166</div>
<div style="top:881.0px;height:20px;line-height:20px;font-size:15.6px;color:#000;white-space:nowrap;letter-spacing:0.1px;left:630.0px;width:600px;text-align:center;">-</div>
<div style="top:881.0px;height:20px;line-height:20px;font-size:15.6px;color:#000;white-space:nowrap;letter-spacing:0.1px;left:786.9000000000001px;width:600px;text-align:center;">$7,105,966</div>
<div style="top:903.5px;height:19px;line-height:19px;font-size:14.85px;color:#000;white-space:nowrap;left:37.5px;">Owner NPV</div>
<div style="top:903.0px;height:20px;line-height:20px;font-size:15.6px;color:#000;white-space:nowrap;letter-spacing:0.1px;left:1.8999999999999773px;width:600px;text-align:center;">$7,322,477</div>
<div style="top:639.5px;height:19px;line-height:19px;font-size:14.85px;color:#000;white-space:nowrap;left:37.5px;text-decoration:underline;">80%</div>
<div style="top:815.5px;height:19px;line-height:19px;font-size:14.85px;color:#000;white-space:nowrap;left:37.5px;text-decoration:underline;">20%</div>
<div style="top:969.5px;height:19px;line-height:19px;font-size:14.85px;color:#000;white-space:nowrap;left:37.5px;">Check</div>
<div style="top:969.0px;height:20px;line-height:20px;font-size:15.6px;color:#000;white-space:nowrap;left:70.0px;width:600px;text-align:center;">-</div>
<div style="top:969.0px;height:20px;line-height:20px;font-size:15.6px;color:#000;white-space:nowrap;left:227.0px;width:600px;text-align:center;">-</div>
<div style="top:969.0px;height:20px;line-height:20px;font-size:15.6px;color:#000;white-space:nowrap;left:384.0px;width:600px;text-align:center;">-</div>
<div style="top:969.0px;height:20px;line-height:20px;font-size:15.6px;color:#000;white-space:nowrap;left:541.0px;width:600px;text-align:center;">-</div>
<div style="top:969.0px;height:20px;line-height:20px;font-size:15.6px;color:#000;white-space:nowrap;left:698.0px;width:600px;text-align:center;">-</div>
<div style="top:969.0px;height:20px;line-height:20px;font-size:15.6px;color:#000;white-space:nowrap;left:855.0px;width:600px;text-align:center;">-</div>
<div style="left:217px;top:996px;width:952px;height:330px;background:#e2efda;border:1px solid #222;box-sizing:border-box;"></div>
<div style="top:1009.0px;height:27px;line-height:27px;font-size:21px;color:#595959;white-space:nowrap;font-weight:700;left:242.0px;width:900px;text-align:center;">Cash Flow (Investor vs Owner/Operator)</div>
<div style="top:1046.5px;height:16px;line-height:16px;font-size:12.1px;color:#595959;white-space:nowrap;letter-spacing:0.1px;left:-296px;width:600px;text-align:right;">$50,000,000</div>
<div style="left:318px;top:1055px;width:834px;height:1px;background:#d5d7d8;"></div>
<div style="top:1102.0px;height:16px;line-height:16px;font-size:12.1px;color:#595959;white-space:nowrap;letter-spacing:0.1px;left:-296px;width:600px;text-align:right;">$40,000,000</div>
<div style="left:318px;top:1111px;width:834px;height:1px;background:#d5d7d8;"></div>
<div style="top:1157.6px;height:16px;line-height:16px;font-size:12.1px;color:#595959;white-space:nowrap;letter-spacing:0.1px;left:-296px;width:600px;text-align:right;">$30,000,000</div>
<div style="left:318px;top:1166px;width:834px;height:1px;background:#d5d7d8;"></div>
<div style="top:1213.2px;height:16px;line-height:16px;font-size:12.1px;color:#595959;white-space:nowrap;letter-spacing:0.1px;left:-296px;width:600px;text-align:right;">$20,000,000</div>
<div style="left:318px;top:1222px;width:834px;height:1px;background:#d5d7d8;"></div>
<div style="top:1268.7px;height:16px;line-height:16px;font-size:12.1px;color:#595959;white-space:nowrap;letter-spacing:0.1px;left:-296px;width:600px;text-align:right;">$10,000,000</div>
<div style="left:318px;top:1277px;width:834px;height:1px;background:#d5d7d8;"></div>
<div style="left:1046px;top:1078px;width:32px;height:240px;background:#595959;border:1px solid #333;box-sizing:border-box;"></div>
<svg style="left:19px;top:19px;" width="22" height="22" viewBox="0 0 22 22">
<rect x="6" y="1" width="15" height="20" rx="1.5" fill="#21a366"/>
<rect x="13.5" y="1" width="7.5" height="5" fill="#33c481"/>
<rect x="6" y="6" width="7.5" height="5" fill="#107c41"/>
<rect x="13.5" y="11" width="7.5" height="5" fill="#107c41"/>
<rect x="6" y="11" width="7.5" height="5" fill="#185c37"/>
<rect x="6" y="16" width="15" height="5" rx="1" fill="#185c37"/>
<rect x="0.5" y="5" width="12" height="12" rx="1.2" fill="#107c41"/>
<path d="M3.6 7.8L9.4 14.2M9.4 7.8L3.6 14.2" stroke="#fff" stroke-width="1.7"/></svg>
<div style="top:22.8px;height:17px;line-height:17px;font-size:12.7px;color:#b3b3b3;white-space:nowrap;left:61px;">AutoSave</div>
<div style="left:123px;top:17px;width:53.5px;height:25px;border:1px solid #b9b9b9;border-radius:12.5px;background:#fdfdfd;box-sizing:border-box;"></div>
<div style="left:127.5px;top:21px;width:17px;height:17px;border-radius:8.5px;background:#c2c2c2;"></div>
<div style="top:22.2px;height:18px;line-height:18px;font-size:13.5px;color:#b3b3b3;white-space:nowrap;left:151.5px;">Off</div>
<svg style="left:193px;top:20px;" width="20" height="20" viewBox="0 0 20 20"><path d="M1 2.5Q1 1 2.5 1H17.5Q19 1 19 2.5V17.5Q19 19 17.5 19H2.5Q1 19 1 17.5ZM5 1V7H15V1M5 19V12H15V19" fill="none" stroke="#bdbdbd" stroke-width="1.3"/></svg>
<svg style="left:228px;top:19px;" width="22" height="22" viewBox="0 0 22 22"><path d="M2 2V9H9M2.5 8.5C6 3 13 2 16.5 6C20 10 16 15 9 19.5" fill="none" stroke="#bdbdbd" stroke-width="1.4" stroke-linecap="round" stroke-linejoin="round"/></svg>
<svg style="left:255.10000000000002px;top:26.97px;" width="8.8" height="6.0600000000000005" viewBox="0 0 8.8 6.0600000000000005"><path d="M1 1 L4.4 4.06 L7.8 1" fill="none" stroke="#bdbdbd" stroke-width="1.2" stroke-linecap="round" stroke-linejoin="round"/></svg>
<svg style="left:276px;top:19px;" width="22" height="22" viewBox="0 0 22 22"><path d="M20 2V9H13M19.5 8.5C16 3 9 2 5.5 6C2 10 6 15 13 19.5" fill="none" stroke="#bdbdbd" stroke-width="1.4" stroke-linecap="round" stroke-linejoin="round"/></svg>
<svg style="left:303.1px;top:26.97px;" width="8.8" height="6.0600000000000005" viewBox="0 0 8.8 6.0600000000000005"><path d="M1 1 L4.4 4.06 L7.8 1" fill="none" stroke="#bdbdbd" stroke-width="1.2" stroke-linecap="round" stroke-linejoin="round"/></svg>
<svg style="left:327px;top:26.3px;" width="12" height="10" viewBox="0 0 12 10"><path d="M1 1.5H11M2.8 5L6 8L9.2 5" fill="none" stroke="#bdbdbd" stroke-width="1.2"/></svg>
<div style="top:21.0px;height:19px;line-height:19px;font-size:14.6px;color:#b0b0b0;white-space:nowrap;letter-spacing:-0.3px;left:369px;">Buy Now Pay Later&nbsp; •&nbsp; Saved to this PC</div>
<svg style="left:622.0px;top:26.975px;" width="11.0" height="7.05" viewBox="0 0 11.0 7.05"><path d="M1 1 L5.5 5.05 L10.0 1" fill="none" stroke="#b0b0b0" stroke-width="1.2" stroke-linecap="round" stroke-linejoin="round"/></svg>
<div style="left:1060px;top:10px;width:460px;height:40px;border:1px solid #d9d9d9;border-bottom:2px solid #cfcfcf;border-radius:5px;box-sizing:border-box;background:#f0f0f0;"></div>
<svg style="left:1076px;top:20px;" width="20" height="20" viewBox="0 0 20 20"><circle cx="12" cy="7.5" r="5.3" fill="none" stroke="#b9b9b9" stroke-width="1.3"/><path d="M8.2 11.3L1.5 18" stroke="#b9b9b9" stroke-width="1.3"/></svg>
<div style="top:18.5px;height:22px;line-height:22px;font-size:17px;color:#b9b9b9;white-space:nowrap;left:1112px;">Search</div>
<div style="left:2277px;top:15px;width:30px;height:30px;border-radius:15px;background:#5f3a30;"></div>
<div style="top:23.0px;height:15px;line-height:15px;font-size:11.5px;color:#eee;white-space:nowrap;left:1992.0px;width:600px;text-align:center;">JV</div>
<svg style="left:2343px;top:21px;" width="14" height="18" viewBox="0 0 14 18"><path d="M7 1C3.8 1 1.6 3.4 1.6 6.2C1.6 8.6 3.3 9.8 4 12H10C10.7 9.8 12.4 8.6 12.4 6.2C12.4 3.4 10.2 1 7 1ZM4.5 14.3H9.5M5.3 16.6H8.7" fill="none" stroke="#c2c2c2" stroke-width="1.1"/></svg>
<div style="left:2404px;top:29px;width:12px;height:1px;background:#c2c2c2;"></div>
<svg style="left:2463px;top:23px;" width="14" height="14" viewBox="0 0 14 14"><rect x="0.7" y="3.2" width="9.6" height="9.6" rx="2" fill="none" stroke="#c6c6c6" stroke-width="1.2"/><path d="M3.5 1H10Q13 1 13 4V10.5" fill="none" stroke="#c6c6c6" stroke-width="1.2"/></svg>
<svg style="left:2523px;top:23px;" width="14" height="14" viewBox="0 0 14 14"><path d="M1 1L13 13M13 1L1 13" stroke="#c2c2c2" stroke-width="1.1"/></svg>
<div style="top:71.0px;height:22px;line-height:22px;font-size:17px;color:#242424;white-space:nowrap;letter-spacing:-0.1px;left:27px;">File</div>
<div style="top:71.0px;height:22px;line-height:22px;font-size:16.9px;color:#1f1f1f;white-space:nowrap;font-weight:700;letter-spacing:-0.25px;left:84px;">Home</div>
<div style="top:71.0px;height:22px;line-height:22px;font-size:17px;color:#242424;white-space:nowrap;letter-spacing:-0.1px;left:154px;">Insert</div>
<div style="top:71.0px;height:22px;line-height:22px;font-size:17px;color:#242424;white-space:nowrap;letter-spacing:-0.1px;left:221px;">Page Layout</div>
<div style="top:71.0px;height:22px;line-height:22px;font-size:17px;color:#242424;white-space:nowrap;letter-spacing:-0.1px;left:338px;">Formulas</div>
<div style="top:71.0px;height:22px;line-height:22px;font-size:17px;color:#242424;white-space:nowrap;letter-spacing:-0.1px;left:431px;">Data</div>
<div style="top:71.0px;height:22px;line-height:22px;font-size:17px;color:#242424;white-space:nowrap;letter-spacing:-0.1px;left:491px;">Review</div>
<div style="top:71.0px;height:22px;line-height:22px;font-size:17px;color:#242424;white-space:nowrap;letter-spacing:-0.1px;left:568px;">View</div>
<div style="top:71.0px;height:22px;line-height:22px;font-size:17px;color:#242424;white-space:nowrap;letter-spacing:-0.1px;left:628px;">Developer</div>
<div style="top:71.0px;height:22px;line-height:22px;font-size:17px;color:#242424;white-space:nowrap;letter-spacing:-0.1px;left:729px;">Help</div>
<div style="top:71.0px;height:22px;line-height:22px;font-size:17px;color:#242424;white-space:nowrap;letter-spacing:-0.1px;left:788px;">Acrobat</div>
<div style="left:84.5px;top:94.3px;width:47.5px;height:2.8px;background:#107c41;border-radius:1.5px;"></div>
<div style="left:2287px;top:65px;width:117px;height:30px;border:1px solid #8f8f8f;border-radius:5px;box-sizing:border-box;background:#fff;"></div>
<svg style="left:2294px;top:72px;" width="16" height="16" viewBox="0 0 16 16"><path d="M1 1.5H13.5V9.5H6L3 12.5V9.5H1Z" fill="none" stroke="#333" stroke-width="1.2" stroke-linejoin="round"/></svg>
<div style="top:69.0px;height:22px;line-height:22px;font-size:17.2px;color:#242424;white-space:nowrap;letter-spacing:0px;left:2313px;">Comments</div>
<div style="left:2414px;top:65px;width:89px;height:30px;border-radius:5px;background:#107c41;"></div>
<svg style="left:2419px;top:72px;" width="18" height="16" viewBox="0 0 18 16"><path d="M5 6H1.5V14.5H13.5V11M6 10.5C6 6.5 8.5 4.8 11 4.8V1.8L16 6.3L11 10.8V7.8C9 7.8 7.2 8.3 6 10.5Z" fill="none" stroke="#fff" stroke-width="1.2" stroke-linejoin="round"/></svg>
<div style="top:69.5px;height:21px;line-height:21px;font-size:16.4px;color:#fff;white-space:nowrap;font-weight:700;letter-spacing:-0.4px;left:2440px;">Share</div>
<svg style="left:2489.8px;top:77.56px;" width="8.4" height="5.880000000000001" viewBox="0 0 8.4 5.880000000000001"><path d="M1 1 L4.2 3.88 L7.4 1" fill="none" stroke="#fff" stroke-width="1.3" stroke-linecap="round" stroke-linejoin="round"/></svg>
<svg style="left:2520px;top:69px;" width="22" height="22" viewBox="0 0 22 22"><path d="M6 5V1.5H20.5V10.5H18L15.5 13V10.5H14" fill="#f8f8f8" stroke="#333" stroke-width="1.2" stroke-linejoin="round"/><circle cx="8.3" cy="10.3" r="3.5" fill="#f8f8f8" stroke="#333" stroke-width="1.2"/><path d="M1.5 21C1.5 16.5 4.5 15 8.3 15C12 15 15 16.5 15 21" fill="#f8f8f8" stroke="#333" stroke-width="1.2"/></svg>
<div style="left:10px;top:100px;width:2540px;height:124px;background:#fff;border-radius:9px;box-shadow:0 1.5px 4px rgba(0,0,0,.2),0 0 1px rgba(0,0,0,.12);"></div>
<svg style="left:36px;top:109px;" width="36" height="40" viewBox="0 0 36 40">
<rect x="2.2" y="7.2" width="24.3" height="28.4" fill="#fafafa" stroke="#e8912d" stroke-width="2"/>
<rect x="3.7" y="8.7" width="21.3" height="25.4" fill="none" stroke="#fbe0a8" stroke-width="1"/>
<path d="M6.8 10.4V6.2H10.2C10.4 3.6 12 1.9 14.3 1.9C16.6 1.9 18.2 3.6 18.4 6.2H21.9V10.4Z" fill="#fafafa" stroke="#7a7a7a" stroke-width="1.4" stroke-linejoin="round"/>
<rect x="18.3" y="17.1" width="16" height="20.8" fill="#fafafa" stroke="#5c5c5c" stroke-width="1.4"/></svg>
<div style="top:152.4px;height:20px;line-height:20px;font-size:15.0px;color:#262626;white-space:nowrap;letter-spacing:-0.9px;left:-249.0px;width:600px;text-align:center;">Paste</div>
<svg style="left:45.7px;top:179.015px;" width="8.6" height="5.97" viewBox="0 0 8.6 5.97"><path d="M1 1 L4.3 3.97 L7.6 1" fill="none" stroke="#444" stroke-width="1.3" stroke-linecap="round" stroke-linejoin="round"/></svg>
<svg style="left:86px;top:108px;" width="16" height="22" viewBox="0 0 16 22"><path d="M4.1 1.4L11.3 16.4M11.6 1.4L4.7 16.4" stroke="#444" stroke-width="1.2" fill="none"/><circle cx="4.3" cy="18.6" r="2.1" fill="none" stroke="#2b88d8" stroke-width="1.4"/><circle cx="11.8" cy="18.6" r="2.1" fill="none" stroke="#2b88d8" stroke-width="1.4"/></svg>
<div style="top:109.5px;height:20px;line-height:20px;font-size:15.0px;color:#262626;white-space:nowrap;letter-spacing:-0.2px;left:109px;">Cut</div>
<svg style="left:84px;top:140px;" width="21" height="22" viewBox="0 0 21 22"><path d="M7.4 18.2H0.7V1.4H6.2Q8 1.4 8.6 3.2L9 4.6" fill="#fafafa" stroke="#555" stroke-width="1.3" stroke-linejoin="round"/><path d="M7.6 4.7H14.6L19.7 9.9V20.6H7.6Z" fill="#fafafa" stroke="#444" stroke-width="1.4" stroke-linejoin="round"/><path d="M14.4 4.9V10H19.5M10.6 13.7H16.8M10.6 16.6H16.8" fill="none" stroke="#555" stroke-width="1.2"/></svg>
<div style="top:141.5px;height:20px;line-height:20px;font-size:15.0px;color:#262626;white-space:nowrap;letter-spacing:-0.2px;left:109px;">Copy</div>
<svg style="left:163.7px;top:149.515px;" width="8.6" height="5.97" viewBox="0 0 8.6 5.97"><path d="M1 1 L4.3 3.97 L7.6 1" fill="none" stroke="#444" stroke-width="1.3" stroke-linecap="round" stroke-linejoin="round"/></svg>
<svg style="left:84px;top:172px;" width="22" height="21" viewBox="0 0 22 21"><path d="M14.8 3.9L18.9 1.4L19.9 3.1L16 5.9Z" fill="#fff" stroke="#444" stroke-width="1.2" stroke-linejoin="round"/><path d="M8.6 5.1L12.3 3.1L18 10L14.8 12.5Z" fill="#fff" stroke="#444" stroke-width="1.3" stroke-linejoin="round"/><path d="M0.9 9.6C4 9.4 6.5 8 8.2 6.3L15.2 13.3L8.6 19.1Z" fill="#fdeab8" stroke="#e07b1a" stroke-width="1.4" stroke-linejoin="round"/><path d="M3.5 11.5C6.5 13 9.5 13.5 12.5 13" fill="none" stroke="#e07b1a" stroke-width="1"/></svg>
<div style="top:173.5px;height:20px;line-height:20px;font-size:15.0px;color:#262626;white-space:nowrap;letter-spacing:-0.2px;left:109px;">Format Painter</div>
<div style="top:202.5px;height:18px;line-height:18px;font-size:13.5px;color:#3b3b3b;white-space:nowrap;letter-spacing:-0.05px;left:-190.0px;width:600px;text-align:center;">Clipboard</div>
<svg style="left:211px;top:207px;" width="10" height="10" viewBox="0 0 10 10"><path d="M0.6 5V0.6H5M3.2 3.2L8.8 8.8M9 4.2V9H4.2" fill="none" stroke="#444" stroke-width="1.15"/></svg>
<div style="left:225px;top:106px;width:1px;height:111px;background:#d1d1d1;"></div>
<div style="left:236px;top:114px;width:143px;height:30px;border:1px solid #8d8d8d;border-radius:5px;box-sizing:border-box;background:#fff;"></div>
<div style="left:382px;top:114px;width:62px;height:30px;border:1px solid #8d8d8d;border-radius:5px;box-sizing:border-box;background:#fff;"></div>
<div style="top:119.5px;height:20px;line-height:20px;font-size:15.4px;color:#262626;white-space:nowrap;letter-spacing:-0.2px;left:240px;">Calibri</div>
<div style="top:119.5px;height:20px;line-height:20px;font-size:15.4px;color:#262626;white-space:nowrap;letter-spacing:-0.2px;left:386px;">11</div>
<svg style="left:367.7px;top:127.01499999999999px;" width="8.6" height="5.97" viewBox="0 0 8.6 5.97"><path d="M1 1 L4.3 3.97 L7.6 1" fill="none" stroke="#333" stroke-width="1.3" stroke-linecap="round" stroke-linejoin="round"/></svg>
<svg style="left:431.7px;top:127.01499999999999px;" width="8.6" height="5.97" viewBox="0 0 8.6 5.97"><path d="M1 1 L4.3 3.97 L7.6 1" fill="none" stroke="#333" stroke-width="1.3" stroke-linecap="round" stroke-linejoin="round"/></svg>
<div style="top:112.5px;height:29px;line-height:29px;font-size:22px;color:#333;white-space:nowrap;left:452px;">A</div>
<svg style="left:464.5px;top:120px;" width="8" height="6" viewBox="0 0 8 6"><path d="M1 4.5L4 1.5L7 4.5" fill="none" stroke="#2b88d8" stroke-width="1.3"/></svg>
<div style="top:119.5px;height:21px;line-height:21px;font-size:16.5px;color:#333;white-space:nowrap;left:486.5px;">A</div>
<svg style="left:496px;top:119.5px;" width="8" height="6" viewBox="0 0 8 6"><path d="M1 1.5L4 4.5L7 1.5" fill="none" stroke="#2b88d8" stroke-width="1.3"/></svg>
<div style="top:157.5px;height:21px;line-height:21px;font-size:16.5px;color:#333;white-space:nowrap;font-weight:700;left:-48.5px;width:600px;text-align:center;">B</div>
<div style="top:156.5px;height:23px;line-height:23px;font-size:18px;color:#333;white-space:nowrap;left:-17.0px;width:600px;text-align:center;font-family:'Liberation Serif',serif;font-style:italic;">I</div>
<div style="top:157.0px;height:21px;line-height:21px;font-size:16px;color:#333;white-space:nowrap;left:14.5px;width:600px;text-align:center;">U</div>
<div style="left:308.5px;top:175.8px;width:12px;height:1.2px;background:#333;"></div>
<svg style="left:333.7px;top:167.015px;" width="8.6" height="5.97" viewBox="0 0 8.6 5.97"><path d="M1 1 L4.3 3.97 L7.6 1" fill="none" stroke="#444" stroke-width="1.3" stroke-linecap="round" stroke-linejoin="round"/></svg>
<div style="left:351px;top:154px;width:1px;height:30px;background:#d1d1d1;"></div>
<svg style="left:359px;top:159px;" width="20" height="20" viewBox="0 0 20 20"><path d="M0.6 0.6H18.6M0.6 0.6V16.4M18.6 0.6V16.4M9.6 0.6V16.4M0.6 8.4H18.6" fill="none" stroke="#3a3a3a" stroke-width="1.2" stroke-dasharray="1.3 1.2"/><rect x="1.2" y="1.2" width="16.8" height="15" fill="#f4f4f4" opacity=".5"/><path d="M0 17.7H19.2" stroke="#3a3a3a" stroke-width="1.7"/></svg>
<svg style="left:387.7px;top:167.015px;" width="8.6" height="5.97" viewBox="0 0 8.6 5.97"><path d="M1 1 L4.3 3.97 L7.6 1" fill="none" stroke="#444" stroke-width="1.3" stroke-linecap="round" stroke-linejoin="round"/></svg>
<div style="left:405px;top:154px;width:1px;height:30px;background:#d1d1d1;"></div>
<svg style="left:413px;top:158px;" width="21" height="22" viewBox="0 0 21 22"><path d="M9.5 3.5L3.5 10.5L8.5 14.5L14.8 8Z" fill="#fff" stroke="#444" stroke-width="1.2" stroke-linejoin="round"/><path d="M9.5 3.5C9 1.5 10.5 0.8 11.5 2.5L12.5 5" fill="none" stroke="#444" stroke-width="1.1"/><path d="M15.2 6.5C16.8 8.5 17.5 10.3 17 11.8" fill="none" stroke="#2b88d8" stroke-width="2"/><rect x="0" y="16.5" width="20" height="4.5" fill="#ffff00"/></svg>
<svg style="left:441.7px;top:167.015px;" width="8.6" height="5.97" viewBox="0 0 8.6 5.97"><path d="M1 1 L4.3 3.97 L7.6 1" fill="none" stroke="#444" stroke-width="1.3" stroke-linecap="round" stroke-linejoin="round"/></svg>
<div style="top:153.8px;height:25px;line-height:25px;font-size:19px;color:#333;white-space:nowrap;left:174.0px;width:600px;text-align:center;">A</div>
<div style="left:464px;top:174.5px;width:20px;height:4.5px;background:#ff0000;"></div>
<svg style="left:492.7px;top:167.015px;" width="8.6" height="5.97" viewBox="0 0 8.6 5.97"><path d="M1 1 L4.3 3.97 L7.6 1" fill="none" stroke="#444" stroke-width="1.3" stroke-linecap="round" stroke-linejoin="round"/></svg>
<div style="top:202.5px;height:18px;line-height:18px;font-size:13.5px;color:#3b3b3b;white-space:nowrap;letter-spacing:-0.05px;left:61.5px;width:600px;text-align:center;">Font</div>
<svg style="left:503px;top:207px;" width="10" height="10" viewBox="0 0 10 10"><path d="M0.6 5V0.6H5M3.2 3.2L8.8 8.8M9 4.2V9H4.2" fill="none" stroke="#444" stroke-width="1.15"/></svg>
<div style="left:517px;top:106px;width:1px;height:111px;background:#d1d1d1;"></div>
<svg style="left:534px;top:118.5px;" width="18" height="20" viewBox="0 0 18 20"><rect x="0" y="0" width="18" height="1.6" fill="#555"/><rect x="0" y="6" width="14" height="1.6" fill="#555"/><rect x="0" y="12" width="18" height="1.6" fill="#555"/></svg>
<svg style="left:566px;top:122.5px;" width="18" height="18" viewBox="0 0 18 18"><rect x="0" y="0.0" width="18" height="1.6" fill="#555"/><rect x="0" y="5.6" width="14" height="1.6" fill="#555"/><rect x="0" y="11.2" width="18" height="1.6" fill="#555"/></svg>
<div style="left:592px;top:114px;width:30px;height:30px;border:1px solid #8a8a8a;border-radius:5px;box-sizing:border-box;background:#e6e6e6;"></div>
<svg style="left:598px;top:127px;" width="18" height="18" viewBox="0 0 18 18"><rect x="0" y="0.0" width="18" height="1.6" fill="#555"/><rect x="0" y="5.6" width="14" height="1.6" fill="#555"/><rect x="0" y="11.2" width="18" height="1.6" fill="#555"/></svg>
<div style="left:624px;top:114px;width:1px;height:30px;background:#d1d1d1;"></div>
<div style="top:120.5px;height:16px;line-height:16px;font-size:12px;color:#444;white-space:nowrap;left:632.5px;transform:rotate(-42deg);transform-origin:left center;">ab</div>
<svg style="left:636.5px;top:121.5px;" width="18" height="18" viewBox="0 0 18 18"><path d="M2 16L14 3M8.5 3H14.5V9" fill="none" stroke="#2b88d8" stroke-width="1.4"/></svg>
<svg style="left:659.2px;top:127.51499999999999px;" width="8.6" height="5.97" viewBox="0 0 8.6 5.97"><path d="M1 1 L4.3 3.97 L7.6 1" fill="none" stroke="#444" stroke-width="1.3" stroke-linecap="round" stroke-linejoin="round"/></svg>
<div style="left:696px;top:113px;width:1px;height:78px;background:#d1d1d1;"></div>
<div style="top:116.0px;height:16px;line-height:16px;font-size:12.5px;color:#444;white-space:nowrap;left:711px;">ab</div>
<div style="top:126.5px;height:16px;line-height:16px;font-size:12.5px;color:#444;white-space:nowrap;left:711px;">c</div>
<svg style="left:718px;top:128px;" width="13" height="12" viewBox="0 0 13 12"><path d="M1 1.5H8.5C11 1.5 12 3 12 4.8C12 6.8 11 8.2 8.5 8.2H3M5.5 5.2L2.5 8.2L5.5 11.2" fill="none" stroke="#2b88d8" stroke-width="1.3"/></svg>
<div style="top:119.5px;height:20px;line-height:20px;font-size:15.0px;color:#262626;white-space:nowrap;letter-spacing:-0.2px;left:734px;">Wrap Text</div>
<svg style="left:534px;top:160.5px;" width="18" height="22" viewBox="0 0 18 22"><rect x="0" y="0.0" width="18" height="1.6" fill="#555"/><rect x="0" y="5.2" width="12" height="1.6" fill="#555"/><rect x="0" y="10.4" width="18" height="1.6" fill="#555"/><rect x="0" y="15.600000000000001" width="12" height="1.6" fill="#555"/></svg>
<svg style="left:566px;top:160.5px;" width="18" height="22" viewBox="0 0 18 22"><rect x="0.0" y="0.0" width="18" height="1.6" fill="#555"/><rect x="3.0" y="5.2" width="12" height="1.6" fill="#555"/><rect x="0.0" y="10.4" width="18" height="1.6" fill="#555"/><rect x="3.0" y="15.600000000000001" width="12" height="1.6" fill="#555"/></svg>
<svg style="left:598px;top:160.5px;" width="18" height="22" viewBox="0 0 18 22"><rect x="0" y="0.0" width="18" height="1.6" fill="#555"/><rect x="6" y="5.2" width="12" height="1.6" fill="#555"/><rect x="0" y="10.4" width="18" height="1.6" fill="#555"/><rect x="6" y="15.600000000000001" width="12" height="1.6" fill="#555"/></svg>
<div style="left:624px;top:154px;width:1px;height:30px;background:#d1d1d1;"></div>
<svg style="left:632px;top:160px;" width="19" height="18" viewBox="0 0 19 18"><path d="M0 0.6H18M8 5.8H18M8 11H18M0 16.2H18" stroke="#555" stroke-width="1.6"/><path d="M6.8 8.4H0.8M3.4 5.4L0.6 8.4L3.4 11.4" fill="none" stroke="#2b88d8" stroke-width="1.3"/></svg>
<svg style="left:664px;top:160px;" width="19" height="18" viewBox="0 0 19 18"><path d="M0 0.6H18M8 5.8H18M8 11H18M0 16.2H18" stroke="#555" stroke-width="1.6"/><path d="M0.3 8.4H6.3M3.6 5.4L6.4 8.4L3.6 11.4" fill="none" stroke="#2b88d8" stroke-width="1.3"/></svg>
<svg style="left:709px;top:159px;" width="20" height="19" viewBox="0 0 20 19"><rect x="0.6" y="0.6" width="18.4" height="17.6" fill="none" stroke="#666" stroke-width="1.2"/><path d="M0.6 4.5H19M0.6 14H19M9.8 0.6V4.5M9.8 14V18.2" stroke="#666" stroke-width="1.1"/><rect x="1.2" y="5.1" width="17.2" height="8.3" fill="#fff" stroke="#2b88d8" stroke-width="1.2"/><path d="M3.5 9.2H16M6 6.9L3.5 9.2L6 11.5M13.5 6.9L16 9.2L13.5 11.5" fill="none" stroke="#2b88d8" stroke-width="1.2"/></svg>
<div style="top:159.5px;height:20px;line-height:20px;font-size:15.0px;color:#262626;white-space:nowrap;letter-spacing:-0.2px;left:734px;">Merge &amp; Center</div>
<svg style="left:860.7px;top:167.015px;" width="8.6" height="5.97" viewBox="0 0 8.6 5.97"><path d="M1 1 L4.3 3.97 L7.6 1" fill="none" stroke="#444" stroke-width="1.3" stroke-linecap="round" stroke-linejoin="round"/></svg>
<div style="top:202.5px;height:18px;line-height:18px;font-size:13.5px;color:#3b3b3b;white-space:nowrap;letter-spacing:-0.05px;left:394.0px;width:600px;text-align:center;">Alignment</div>
<svg style="left:876px;top:207px;" width="10" height="10" viewBox="0 0 10 10"><path d="M0.6 5V0.6H5M3.2 3.2L8.8 8.8M9 4.2V9H4.2" fill="none" stroke="#444" stroke-width="1.15"/></svg>
<div style="left:890px;top:106px;width:1px;height:111px;background:#d1d1d1;"></div>
<div style="left:901px;top:114px;width:180px;height:30px;border:1px solid #8d8d8d;border-radius:5px;box-sizing:border-box;background:#fff;"></div>
<div style="top:119.5px;height:20px;line-height:20px;font-size:15.4px;color:#262626;white-space:nowrap;letter-spacing:-0.4px;left:904px;">General</div>
<svg style="left:1068.7px;top:127.01499999999999px;" width="8.6" height="5.97" viewBox="0 0 8.6 5.97"><path d="M1 1 L4.3 3.97 L7.6 1" fill="none" stroke="#333" stroke-width="1.3" stroke-linecap="round" stroke-linejoin="round"/></svg>
<div style="top:155.0px;height:28px;line-height:28px;font-size:21.5px;color:#333;white-space:nowrap;left:615.0px;width:600px;text-align:center;transform:scaleX(.88);">$</div>
<svg style="left:934.7px;top:167.015px;" width="8.6" height="5.97" viewBox="0 0 8.6 5.97"><path d="M1 1 L4.3 3.97 L7.6 1" fill="none" stroke="#444" stroke-width="1.3" stroke-linecap="round" stroke-linejoin="round"/></svg>
<div style="top:154.0px;height:30px;line-height:30px;font-size:23px;color:#333;white-space:nowrap;left:667.0px;width:600px;text-align:center;transform:scaleX(.9);">%</div>
<svg style="left:992.5px;top:161px;" width="14" height="19" viewBox="0 0 14 19"><path d="M6.5 1.5C9 1.5 10.3 3.3 10.3 5.8C10.3 10 7.5 13.5 3.5 15.3L3 14.3C5.5 12.8 6.8 11 7 9.3C5 9.5 3.2 8 3.2 5.5C3.2 3.2 4.6 1.5 6.5 1.5Z" fill="#333"/></svg>
<div style="left:1016px;top:154px;width:1px;height:30px;background:#d1d1d1;"></div>
<div style="top:156.0px;height:14px;line-height:14px;font-size:10.5px;color:#444;white-space:nowrap;left:740.0px;width:600px;text-align:center;">0</div>
<div style="top:167.0px;height:14px;line-height:14px;font-size:10.5px;color:#444;white-space:nowrap;left:735.5px;width:600px;text-align:center;">.00</div>
<svg style="left:1024px;top:159.3px;" width="12" height="10" viewBox="0 0 12 10"><path d="M11 5H1.5M5 1.5L1.5 5L5 8.5" fill="none" stroke="#2b88d8" stroke-width="1.3"/></svg>
<div style="top:156.0px;height:14px;line-height:14px;font-size:10.5px;color:#444;white-space:nowrap;left:767.5px;width:600px;text-align:center;">.00</div>
<div style="top:167.0px;height:14px;line-height:14px;font-size:10.5px;color:#444;white-space:nowrap;left:770.5px;width:600px;text-align:center;">.0</div>
<svg style="left:1055px;top:169px;" width="12" height="10" viewBox="0 0 12 10"><path d="M1 5H10.5M7 1.5L10.5 5L7 8.5" fill="none" stroke="#2b88d8" stroke-width="1.3"/></svg>
<div style="top:202.5px;height:18px;line-height:18px;font-size:13.5px;color:#3b3b3b;white-space:nowrap;letter-spacing:-0.05px;left:680.0px;width:600px;text-align:center;">Number</div>
<svg style="left:1076px;top:207px;" width="10" height="10" viewBox="0 0 10 10"><path d="M0.6 5V0.6H5M3.2 3.2L8.8 8.8M9 4.2V9H4.2" fill="none" stroke="#444" stroke-width="1.15"/></svg>
<div style="left:1090px;top:106px;width:1px;height:111px;background:#d1d1d1;"></div>
<svg style="left:1129.5px;top:114px;" width="36" height="28" viewBox="0 0 36 28"><rect x="0.7" y="0.7" width="34" height="26.6" fill="#fafafa" stroke="#666" stroke-width="1.3"/><path d="M6.4 0.7V27.3M28.6 0.7V27.3M22.4 0.7V9.6M22.4 18.4V9.6M0.7 9.6H34.7M0.7 18.4H34.7" stroke="#666" stroke-width="1.1" fill="none"/><rect x="6.6" y="1" width="15.6" height="8.4" fill="#fa9ba4" stroke="#d9363e" stroke-width="1.1"/><rect x="6.6" y="9.8" width="10" height="8.4" fill="#7ab5ec" stroke="#2b7cd3" stroke-width="1.1"/><rect x="6.6" y="18.6" width="18" height="8.4" fill="#fa9ba4" stroke="#d9363e" stroke-width="1.1"/></svg>
<div style="top:151.0px;height:20px;line-height:20px;font-size:15.0px;color:#262626;white-space:nowrap;letter-spacing:0.15px;left:846.5px;width:600px;text-align:center;">Conditional</div>
<div style="top:170.5px;height:20px;line-height:20px;font-size:15.0px;color:#262626;white-space:nowrap;letter-spacing:0.1px;left:840.5px;width:600px;text-align:center;">Formatting</div>
<svg style="left:1179.9px;top:177.20499999999998px;" width="8.2" height="5.79" viewBox="0 0 8.2 5.79"><path d="M1 1 L4.1 3.79 L7.2 1" fill="none" stroke="#444" stroke-width="1.3" stroke-linecap="round" stroke-linejoin="round"/></svg>
<svg style="left:1212.5px;top:114px;" width="40" height="36" viewBox="0 0 40 36"><rect x="0.7" y="0.7" width="33.6" height="26.6" fill="#fff" stroke="#666" stroke-width="1.3"/><path d="M11.9 0.7V27.3" stroke="#666" stroke-width="1.1"/><path d="M23.1 0.7V27.3" stroke="#666" stroke-width="1.1"/><path d="M0.7 9.6H34.3" stroke="#666" stroke-width="1.1"/><path d="M0.7 18.4H34.3" stroke="#666" stroke-width="1.1"/><rect x="12.1" y="9.6" width="22.2" height="17.7" fill="#7ab5ec" stroke="#2b7cd3" stroke-width="1.1"/><path d="M23.2 9.6V27.3M12.1 18.4H34.3" stroke="#2b7cd3" stroke-width="1.1"/><path d="M36.8 9.6C38 10.4 37.9 11.6 37.2 12.6L25.6 27.4L22.2 25L34 10.2C34.8 9.2 35.9 9 36.8 9.6Z" fill="#fff" stroke="#555" stroke-width="1.2"/><path d="M22.2 25L25.6 27.4C25.2 30.8 21 34.2 11.5 33C14.5 31.6 15.8 30 16.4 28C17.2 25.4 19.8 24 22.2 25Z" fill="#6aabe8" stroke="#2b7cd3" stroke-width="1.1"/></svg>
<div style="top:151.0px;height:20px;line-height:20px;font-size:15.0px;color:#262626;white-space:nowrap;letter-spacing:-0.2px;left:929.5px;width:600px;text-align:center;">Format as</div>
<div style="top:170.5px;height:20px;line-height:20px;font-size:15.0px;color:#262626;white-space:nowrap;letter-spacing:-0.2px;left:924.0px;width:600px;text-align:center;">Table</div>
<svg style="left:1244.9px;top:177.20499999999998px;" width="8.2" height="5.79" viewBox="0 0 8.2 5.79"><path d="M1 1 L4.1 3.79 L7.2 1" fill="none" stroke="#444" stroke-width="1.3" stroke-linecap="round" stroke-linejoin="round"/></svg>
<div style="left:1268px;top:114px;width:298.5px;height:77.7px;border:1px solid #cfcfcf;border-radius:5px;box-sizing:border-box;background:#fff;"></div>
<div style="left:1537px;top:114px;width:29.5px;height:77.7px;border:1px solid #6e6e6e;border-radius:0 5px 5px 0;box-sizing:border-box;background:#fff;"></div>
<svg style="left:1545.5px;top:148px;" width="11" height="9" viewBox="0 0 11 9"><path d="M1 1H10M2.4 4.2L5.5 7.2L8.6 4.2" fill="none" stroke="#333" stroke-width="1.2"/></svg>
<div style="left:1270px;top:117px;width:133px;height:36px;border:1.5px solid #6a6a6a;box-sizing:border-box;background:#fff;box-shadow:inset 0 0 0 3px #ececec;"></div>
<div style="top:125.0px;height:21px;line-height:21px;font-size:16.4px;color:#000;white-space:nowrap;letter-spacing:-0.1px;left:1279px;">Normal</div>
<div style="left:1407px;top:121px;width:125px;height:28px;background:#ffc7ce;"></div>
<div style="top:125.0px;height:21px;line-height:21px;font-size:16.4px;color:#9c0006;white-space:nowrap;letter-spacing:-0.1px;left:1412px;">Bad</div>
<div style="left:1274px;top:157px;width:125px;height:28px;background:#c6efce;"></div>
<div style="top:161.0px;height:21px;line-height:21px;font-size:16.4px;color:#006100;white-space:nowrap;letter-spacing:-0.1px;left:1279px;">Good</div>
<div style="left:1407px;top:157px;width:125px;height:28px;background:#ffeb9c;"></div>
<div style="top:161.0px;height:21px;line-height:21px;font-size:16.4px;color:#9c5700;white-space:nowrap;letter-spacing:-0.1px;left:1412px;">Neutral</div>
<div style="top:202.5px;height:18px;line-height:18px;font-size:13.5px;color:#3b3b3b;white-space:nowrap;letter-spacing:-0.55px;left:1035.5px;width:600px;text-align:center;">Styles</div>
<div style="left:1580px;top:106px;width:1px;height:111px;background:#d1d1d1;"></div>
<svg style="left:1597px;top:114px;" width="42" height="28" viewBox="0 0 42 28"><g transform="translate(2.3,0)"><rect x="0.7" y="0.7" width="34.2" height="26.6" fill="#fff" stroke="#666" stroke-width="1.3"/><path d="M12.1 0.7V27.3" stroke="#666" stroke-width="1.1"/><path d="M23.5 0.7V27.3" stroke="#666" stroke-width="1.1"/><path d="M0.7 9.6H34.9" stroke="#666" stroke-width="1.1"/><path d="M0.7 18.4H34.9" stroke="#666" stroke-width="1.1"/></g><rect x="17.8" y="9.2" width="22" height="9.4" fill="#7ab5ec" stroke="#1e6fc0" stroke-width="1.2"/><path d="M28.6 9.2V18.6" stroke="#1e6fc0" stroke-width="1.2"/><path d="M17.8 10.6H8.8V6L0.8 13.9L8.8 21.8V17.2H17.8Z" fill="#fff" stroke="none"/><path d="M17.8 10.8H9.5M17.8 17H9.5" stroke="#2b88d8" stroke-width="1.1"/><path d="M10 11.5H17.6V16.3H10Z" fill="#a9d0f3"/><path d="M8.8 5.6L0.8 13.9L8.8 22.2" fill="none" stroke="#2b88d8" stroke-width="1.5"/><path d="M1.5 13.9H11" stroke="#2b88d8" stroke-width="1.2"/></svg>
<div style="top:153.0px;height:20px;line-height:20px;font-size:15.0px;color:#262626;white-space:nowrap;letter-spacing:-0.2px;left:1317.0px;width:600px;text-align:center;">Insert</div>
<svg style="left:1612.9px;top:179.605px;" width="8.2" height="5.79" viewBox="0 0 8.2 5.79"><path d="M1 1 L4.1 3.79 L7.2 1" fill="none" stroke="#444" stroke-width="1.3" stroke-linecap="round" stroke-linejoin="round"/></svg>
<svg style="left:1653px;top:114px;" width="40" height="28" viewBox="0 0 40 28"><rect x="0.7" y="0.7" width="33.6" height="26.6" fill="#fff" stroke="#666" stroke-width="1.3"/><path d="M11.9 0.7V27.3" stroke="#666" stroke-width="1.1"/><path d="M23.1 0.7V27.3" stroke="#666" stroke-width="1.1"/><path d="M0.7 9.6H34.3" stroke="#666" stroke-width="1.1"/><path d="M0.7 18.4H34.3" stroke="#666" stroke-width="1.1"/><path d="M5.5 9.5H19L24.5 14.2L19 19H5.5Z" fill="#7ab5ec" stroke="#2b7cd3" stroke-width="1"/><path d="M12.3 9.5V19" stroke="#2b7cd3" stroke-width="1"/><path d="M24 7.5L37 21M37 7.5L24 21" stroke="#e8414f" stroke-width="1.5"/></svg>
<div style="top:153.0px;height:20px;line-height:20px;font-size:15.0px;color:#262626;white-space:nowrap;letter-spacing:-0.2px;left:1371.0px;width:600px;text-align:center;">Delete</div>
<svg style="left:1666.9px;top:179.605px;" width="8.2" height="5.79" viewBox="0 0 8.2 5.79"><path d="M1 1 L4.1 3.79 L7.2 1" fill="none" stroke="#444" stroke-width="1.3" stroke-linecap="round" stroke-linejoin="round"/></svg>
<svg style="left:1707.5px;top:107px;" width="36" height="35" viewBox="0 0 36 35"><path d="M8 2.5H27.5M8 0.5V4.5M27.5 0.5V4.5" stroke="#2b88d8" stroke-width="1.1"/><g transform="translate(0,7)"><rect x="0.7" y="0.7" width="34.1" height="26.6" fill="#fff" stroke="#666" stroke-width="1.3"/><path d="M12.1 0.7V27.3" stroke="#666" stroke-width="1.1"/><path d="M23.4 0.7V27.3" stroke="#666" stroke-width="1.1"/><path d="M0.7 9.6H34.8" stroke="#666" stroke-width="1.1"/><path d="M0.7 18.4H34.8" stroke="#666" stroke-width="1.1"/><rect x="8.8" y="9.6" width="18" height="9" fill="#4a98e2" stroke="#2b7cd3" stroke-width="1"/></g></svg>
<div style="top:151.0px;height:20px;line-height:20px;font-size:15.0px;color:#262626;white-space:nowrap;letter-spacing:-0.2px;left:1424.5px;width:600px;text-align:center;">Format</div>
<svg style="left:1720.4px;top:177.605px;" width="8.2" height="5.79" viewBox="0 0 8.2 5.79"><path d="M1 1 L4.1 3.79 L7.2 1" fill="none" stroke="#444" stroke-width="1.3" stroke-linecap="round" stroke-linejoin="round"/></svg>
<div style="top:202.5px;height:18px;line-height:18px;font-size:13.5px;color:#3b3b3b;white-space:nowrap;letter-spacing:-0.55px;left:1370.5px;width:600px;text-align:center;">Cells</div>
<div style="left:1760px;top:106px;width:1px;height:111px;background:#d1d1d1;"></div>
<svg style="left:1778px;top:110px;" width="17" height="19" viewBox="0 0 17 19"><path d="M15 4V1H1.5L9 9.5L1.5 18H15V15" fill="none" stroke="#444" stroke-width="1.3" stroke-linejoin="miter"/></svg>
<div style="top:109.5px;height:20px;line-height:20px;font-size:15.0px;color:#262626;white-space:nowrap;letter-spacing:-0.2px;left:1801px;">AutoSum</div>
<svg style="left:1882.9px;top:117.105px;" width="8.2" height="5.79" viewBox="0 0 8.2 5.79"><path d="M1 1 L4.1 3.79 L7.2 1" fill="none" stroke="#444" stroke-width="1.3" stroke-linecap="round" stroke-linejoin="round"/></svg>
<svg style="left:1776px;top:142px;" width="21" height="18" viewBox="0 0 21 18"><rect x="0.7" y="0.7" width="19" height="16.3" fill="#fff" stroke="#555" stroke-width="1.3"/><path d="M0.7 3.6H19.7" stroke="#555" stroke-width="1.2"/><path d="M10.2 6V14M6.8 10.8L10.2 14.2L13.6 10.8" fill="none" stroke="#2b88d8" stroke-width="1.4"/></svg>
<div style="top:141.5px;height:20px;line-height:20px;font-size:15.0px;color:#262626;white-space:nowrap;letter-spacing:-0.2px;left:1801px;">Fill</div>
<svg style="left:1824.4px;top:148.20499999999998px;" width="8.2" height="5.79" viewBox="0 0 8.2 5.79"><path d="M1 1 L4.1 3.79 L7.2 1" fill="none" stroke="#444" stroke-width="1.3" stroke-linecap="round" stroke-linejoin="round"/></svg>
<svg style="left:1776px;top:173px;" width="21" height="21" viewBox="0 0 21 21"><path d="M12 1.5L19.5 8.5L9 19.5L1.5 12.5Z" fill="#fff" stroke="#a23bb5" stroke-width="1.4" stroke-linejoin="round"/><path d="M6.3 8L13.8 15L9 19.5L1.5 12.5Z" fill="#d9a6e3" stroke="#a23bb5" stroke-width="1.2" stroke-linejoin="round"/></svg>
<div style="top:173.5px;height:20px;line-height:20px;font-size:15.0px;color:#262626;white-space:nowrap;letter-spacing:-0.2px;left:1801px;">Clear</div>
<svg style="left:1839.4px;top:180.20499999999998px;" width="8.2" height="5.79" viewBox="0 0 8.2 5.79"><path d="M1 1 L4.1 3.79 L7.2 1" fill="none" stroke="#444" stroke-width="1.3" stroke-linecap="round" stroke-linejoin="round"/></svg>
<div style="top:107.2px;height:25px;line-height:25px;font-size:19.5px;color:#2b88d8;white-space:nowrap;left:1912.5px;">A</div>
<div style="top:124.3px;height:25px;line-height:25px;font-size:19px;color:#444;white-space:nowrap;left:1913.5px;">Z</div>
<svg style="left:1928px;top:118.7px;" width="22" height="22" viewBox="0 0 22 22"><path d="M1 1.5H20.5L13.5 10V19.5H8V10Z" fill="#fff" stroke="#555" stroke-width="1.3" stroke-linejoin="round"/></svg>
<div style="top:151.0px;height:20px;line-height:20px;font-size:15.0px;color:#262626;white-space:nowrap;letter-spacing:-0.2px;left:1630.0px;width:600px;text-align:center;">Sort &amp;</div>
<div style="top:170.5px;height:20px;line-height:20px;font-size:15.0px;color:#262626;white-space:nowrap;letter-spacing:-0.2px;left:1625.5px;width:600px;text-align:center;">Filter</div>
<svg style="left:1944.9px;top:177.20499999999998px;" width="8.2" height="5.79" viewBox="0 0 8.2 5.79"><path d="M1 1 L4.1 3.79 L7.2 1" fill="none" stroke="#444" stroke-width="1.3" stroke-linecap="round" stroke-linejoin="round"/></svg>
<svg style="left:1969px;top:110px;" width="37" height="37" viewBox="0 0 37 37"><circle cx="23" cy="14" r="12.3" fill="#fff" stroke="#555" stroke-width="1.3"/><path d="M14.5 23L1 36" stroke="#555" stroke-width="1.4"/></svg>
<div style="top:151.0px;height:20px;line-height:20px;font-size:15.0px;color:#262626;white-space:nowrap;letter-spacing:-0.2px;left:1687.5px;width:600px;text-align:center;">Find &amp;</div>
<div style="top:170.5px;height:20px;line-height:20px;font-size:15.0px;color:#262626;white-space:nowrap;letter-spacing:-0.2px;left:1682.0px;width:600px;text-align:center;">Select</div>
<svg style="left:2004.9px;top:177.20499999999998px;" width="8.2" height="5.79" viewBox="0 0 8.2 5.79"><path d="M1 1 L4.1 3.79 L7.2 1" fill="none" stroke="#444" stroke-width="1.3" stroke-linecap="round" stroke-linejoin="round"/></svg>
<div style="top:202.5px;height:18px;line-height:18px;font-size:13.5px;color:#3b3b3b;white-space:nowrap;letter-spacing:-0.05px;left:1594.0px;width:600px;text-align:center;">Editing</div>
<div style="left:2027px;top:106px;width:1px;height:111px;background:#d1d1d1;"></div>
<svg style="left:2048px;top:110px;" width="36" height="36" viewBox="0 0 36 36"><rect x="1" y="1" width="33.5" height="33.5" fill="#fff" stroke="#dc5e33" stroke-width="1.6"/><rect x="5" y="5" width="10.8" height="10.8" fill="#fff" stroke="#dc5e33" stroke-width="1.5"/><rect x="19.7" y="5" width="10.8" height="10.8" fill="#fff" stroke="#dc5e33" stroke-width="1.5"/><rect x="5" y="19.7" width="10.8" height="10.8" fill="#fff" stroke="#dc5e33" stroke-width="1.5"/><rect x="19.7" y="19.7" width="10.8" height="10.8" fill="#fff" stroke="#dc5e33" stroke-width="1.5"/></svg>
<div style="top:151.0px;height:20px;line-height:20px;font-size:15.0px;color:#262626;white-space:nowrap;letter-spacing:-0.2px;left:1766.0px;width:600px;text-align:center;">Add-ins</div>
<div style="top:202.5px;height:18px;line-height:18px;font-size:13.5px;color:#3b3b3b;white-space:nowrap;letter-spacing:-0.05px;left:1765.0px;width:600px;text-align:center;">Add-ins</div>
<div style="left:2104px;top:106px;width:1px;height:111px;background:#d1d1d1;"></div>
<svg style="left:2125px;top:110px;" width="38" height="36" viewBox="0 0 38 36"><rect x="0.7" y="0.7" width="34.1" height="33.6" fill="#fff" stroke="#666" stroke-width="1.3"/><path d="M12.1 0.7V34.3" stroke="#666" stroke-width="1.1"/><path d="M23.4 0.7V34.3" stroke="#666" stroke-width="1.1"/><path d="M0.7 9.1H34.8" stroke="#666" stroke-width="1.1"/><path d="M0.7 17.5H34.8" stroke="#666" stroke-width="1.1"/><path d="M0.7 25.9H34.8" stroke="#666" stroke-width="1.1"/><rect x="0.7" y="0.7" width="34.1" height="5" fill="#bbb" stroke="#666" stroke-width="1"/><circle cx="17.5" cy="15" r="10.6" fill="#fff" stroke="#555" stroke-width="1.4"/><circle cx="17.5" cy="15" r="8" fill="#fff" stroke="#555" stroke-width="1"/><rect x="11" y="14" width="4" height="6" fill="#ccc" stroke="#777" stroke-width=".8"/><rect x="15" y="10" width="4" height="10" fill="#ccc" stroke="#777" stroke-width=".8"/><rect x="19" y="12" width="4" height="8" fill="#5ea3e6" stroke="#2b7cd3" stroke-width=".8"/><path d="M25 23L36 34.5" stroke="#555" stroke-width="1.6"/></svg>
<div style="top:151.0px;height:20px;line-height:20px;font-size:15.0px;color:#262626;white-space:nowrap;letter-spacing:-0.2px;left:1843.0px;width:600px;text-align:center;">Analyze</div>
<div style="top:170.5px;height:20px;line-height:20px;font-size:15.0px;color:#262626;white-space:nowrap;letter-spacing:-0.2px;left:1843.0px;width:600px;text-align:center;">Data</div>
<svg style="left:2182px;top:110px;" width="38" height="36" viewBox="0 0 38 36"><defs>
<linearGradient id="cpa" x1="0" y1="0" x2="1" y2="1"><stop offset="0" stop-color="#2fb4f0"/><stop offset=".5" stop-color="#1d6fe0"/><stop offset="1" stop-color="#1a48b8"/></linearGradient>
<linearGradient id="cpb" x1="0" y1="0" x2="0" y2="1"><stop offset="0" stop-color="#35c8e8"/><stop offset=".45" stop-color="#6fcf5a"/><stop offset="1" stop-color="#f4c02a"/></linearGradient>
<linearGradient id="cpc" x1="0" y1="0" x2="0" y2="1"><stop offset="0" stop-color="#b45cf0"/><stop offset=".5" stop-color="#f060a8"/><stop offset="1" stop-color="#f7902c"/></linearGradient>
</defs>
<path d="M12 2.5H23C26 2.5 27.5 4 28.3 6.5L30 12H20L17 4.5C16 3 14 2.5 12 2.5Z" fill="url(#cpa)"/>
<path d="M12 2.5C8.5 2.5 7 4.5 6 7.5L1.5 21.5C0.5 25 2.5 27 5.5 27H11.5C14.5 27 16 25 17 22L21 9C19.5 3.5 17 2.5 12 2.5Z" fill="url(#cpb)"/>
<path d="M26 33H15C12 33 10.5 31.5 9.7 29L8.5 25H17.5L21 32C22 33 24 33 26 33Z" fill="#f26a3a"/>
<path d="M26 33C29.5 33 31 31 32 28L36.5 14.5C37.5 11 35.5 9 32.5 9H26.5C23.5 9 22 11 21 14L17 27C18.5 32 21 33 26 33Z" fill="url(#cpc)"/></svg>
<div style="top:151.0px;height:20px;line-height:20px;font-size:15.0px;color:#262626;white-space:nowrap;letter-spacing:-0.2px;left:1900.5px;width:600px;text-align:center;">Copilot</div>
<div style="left:2237px;top:106px;width:1px;height:111px;background:#d1d1d1;"></div>
<svg style="left:2274px;top:112px;" width="34" height="37" viewBox="0 0 34 37"><path d="M15 33H5Q1.5 33 1.5 29.5V5Q1.5 1.5 5 1.5H18L24.5 8V17" fill="none" stroke="#3b7be6" stroke-width="1.5" stroke-linejoin="round"/><path d="M6 18.5C9 17 11.5 12 12 7.5C12.3 5.5 10.5 5.5 10.8 7.5C11.5 12 15 16 19 17C21 17.5 21 15.5 19 15.5C15 15.5 9 17 6 18.5C4.5 19.5 5 20.5 6 18.5Z" fill="none" stroke="#3b7be6" stroke-width="1.1"/><g fill="none" stroke="#3b7be6" stroke-width="1.7" stroke-linecap="round"><path d="M22.5 24.5L26.5 20.5C30 17.5 34 21.5 31 25L29 27"/><path d="M25 28.5L21 32.5C17.5 35.5 13.5 31.5 16.5 28L18.5 26"/><path d="M21 29.5L27 23.5"/></g></svg>
<div style="top:151.0px;height:20px;line-height:20px;font-size:15.0px;color:#262626;white-space:nowrap;letter-spacing:-0.2px;left:1985.5px;width:600px;text-align:center;">Create</div>
<div style="top:170.5px;height:20px;line-height:20px;font-size:15.0px;color:#262626;white-space:nowrap;letter-spacing:-0.2px;left:1985.5px;width:600px;text-align:center;">a PDF</div>
<div style="top:202.5px;height:18px;line-height:18px;font-size:13.5px;color:#3b3b3b;white-space:nowrap;letter-spacing:-0.05px;left:1985.5px;width:600px;text-align:center;">Adobe Acrobat</div>
<div style="left:2334px;top:106px;width:1px;height:111px;background:#d1d1d1;"></div>
<svg style="left:2351px;top:114px;" width="40" height="27" viewBox="0 0 40 27"><path d="M4 3L14 1L14 24L6 24.5Z" fill="#3d94d6"/><path d="M1 8L12 7L14 24L4 25Z" fill="#2f84c8"/><path d="M14 1.5L30 3L31 20L14 24Z" fill="#78bce8"/><path d="M26 4.5L38.5 3.5L36 18.5L27 20Z" fill="#5faee3"/><circle cx="22" cy="13" r="6.3" fill="#f6ea5c" stroke="#b9a81d" stroke-width="1"/><rect x="19.7" y="19" width="4.6" height="4.5" rx="1" fill="#555"/><path d="M20.3 12.5L22 17L23.7 12.5" fill="none" stroke="#8a7a10" stroke-width=".9"/></svg>
<div style="top:151.0px;height:20px;line-height:20px;font-size:15.0px;color:#262626;white-space:nowrap;letter-spacing:-0.2px;left:2070.5px;width:600px;text-align:center;">Solver</div>
<div style="top:202.5px;height:18px;line-height:18px;font-size:13.5px;color:#3b3b3b;white-space:nowrap;letter-spacing:-0.05px;left:2069.5px;width:600px;text-align:center;">Solver</div>
<div style="left:2406px;top:106px;width:1px;height:111px;background:#d1d1d1;"></div>
<svg style="left:2525.5px;top:203.75px;" width="12" height="7.5" viewBox="0 0 12 7.5"><path d="M1 1 L6 5.50 L11 1" fill="none" stroke="#333" stroke-width="1.4" stroke-linecap="round" stroke-linejoin="round"/></svg>
<div style="left:10px;top:234px;width:126.5px;height:30px;border:1px solid #d6d6d6;border-radius:6px;box-sizing:border-box;background:#fff;"></div>
<div style="top:239.0px;height:21px;line-height:21px;font-size:16.4px;color:#262626;white-space:nowrap;letter-spacing:-0.5px;left:17px;">K51</div>
<svg style="left:117.5px;top:246.75px;" width="12" height="7.5" viewBox="0 0 12 7.5"><path d="M1 1 L6 5.50 L11 1" fill="none" stroke="#333" stroke-width="1.4" stroke-linecap="round" stroke-linejoin="round"/></svg>
<div style="left:147.6px;top:242.2px;width:3.2px;height:3.2px;background:#3c3c3c;"></div>
<div style="left:147.6px;top:247.8px;width:3.2px;height:3.2px;background:#3c3c3c;"></div>
<div style="left:147.6px;top:253.4px;width:3.2px;height:3.2px;background:#3c3c3c;"></div>
<div style="left:162px;top:234px;width:106.5px;height:30px;border:1px solid #d6d6d6;border-radius:6px;box-sizing:border-box;background:#fff;"></div>
<svg style="left:170px;top:242px;" width="16" height="16" viewBox="0 0 16 16"><path d="M1 1L14.5 14.5M14.5 1L1 14.5" stroke="#b4b4b4" stroke-width="1.3"/></svg>
<svg style="left:198px;top:241px;" width="21" height="16" viewBox="0 0 21 16"><path d="M1 9.5L6.5 15L19.5 1" fill="none" stroke="#b4b4b4" stroke-width="1.3"/></svg>
<div style="top:235.0px;height:27px;line-height:27px;font-size:20.5px;color:#333;white-space:nowrap;font-weight:700;left:229px;font-family:'Liberation Serif',serif;font-style:italic;">f</div>
<div style="top:240.0px;height:22px;line-height:22px;font-size:17px;color:#333;white-space:nowrap;font-weight:700;left:236.5px;font-family:'Liberation Serif',serif;font-style:italic;">x</div>
<svg style="left:254.5px;top:246.975px;" width="11.0" height="7.05" viewBox="0 0 11.0 7.05"><path d="M1 1 L5.5 5.05 L10.0 1" fill="none" stroke="#999" stroke-width="1.2" stroke-linecap="round" stroke-linejoin="round"/></svg>
<div style="left:274px;top:234px;width:2276px;height:30px;border:1px solid #d6d6d6;border-radius:6px;box-sizing:border-box;background:#fff;"></div>
<svg style="left:2532px;top:244.75px;" width="12" height="7.5" viewBox="0 0 12 7.5"><path d="M1 1 L6 5.50 L11 1" fill="none" stroke="#333" stroke-width="1.4" stroke-linecap="round" stroke-linejoin="round"/></svg>
<div style="left:0px;top:1313px;width:2560px;height:39px;background:#f0f0f0;"></div>
<div style="left:0px;top:1313px;width:2534px;height:1px;background:#dcdcdc;"></div>
<svg style="left:30px;top:1324px;" width="10" height="16" viewBox="0 0 10 16"><path d="M8.5 1L1.5 8L8.5 15" fill="none" stroke="#444" stroke-width="1.4"/></svg>
<svg style="left:71px;top:1324px;" width="10" height="16" viewBox="0 0 10 16"><path d="M1.5 1L8.5 8L1.5 15" fill="none" stroke="#444" stroke-width="1.4"/></svg>
<div style="left:108.0px;top:1330px;width:3.4px;height:3.4px;background:#444;border-radius:2px;"></div>
<div style="left:113.2px;top:1330px;width:3.4px;height:3.4px;background:#444;border-radius:2px;"></div>
<div style="left:118.4px;top:1330px;width:3.4px;height:3.4px;background:#444;border-radius:2px;"></div>
<div style="left:141px;top:1318px;width:175px;height:30px;background:#7030a0;border-radius:5px;"></div>
<div style="top:1322.5px;height:22px;line-height:22px;font-size:17.3px;color:#fff;white-space:nowrap;letter-spacing:-0.3px;left:-71.5px;width:600px;text-align:center;">Executive Summary</div>
<div style="left:327px;top:1318px;width:202px;height:30px;background:#ffffcc;border-radius:5px;"></div>
<div style="top:1322.5px;height:22px;line-height:22px;font-size:17.3px;color:#111;white-space:nowrap;letter-spacing:-0.1px;left:128.0px;width:600px;text-align:center;">Software Development</div>
<div style="left:540px;top:1318px;width:88px;height:30px;background:#ffffcc;border-radius:5px;"></div>
<div style="top:1322.5px;height:22px;line-height:22px;font-size:17.3px;color:#111;white-space:nowrap;letter-spacing:-0.3px;left:284.0px;width:600px;text-align:center;">Revenue</div>
<div style="top:1322.5px;height:22px;line-height:22px;font-size:17.3px;color:#111;white-space:nowrap;letter-spacing:-0.9px;left:360.5px;width:600px;text-align:center;">M1</div>
<div style="top:1322.5px;height:22px;line-height:22px;font-size:17.3px;color:#111;white-space:nowrap;letter-spacing:-0.9px;left:416.0px;width:600px;text-align:center;">M2</div>
<div style="top:1322.5px;height:22px;line-height:22px;font-size:17.3px;color:#111;white-space:nowrap;letter-spacing:-0.9px;left:473.0px;width:600px;text-align:center;">M3</div>
<div style="left:807px;top:1318px;width:63px;height:30px;background:#ffffcc;border-radius:5px;"></div>
<div style="top:1322.5px;height:22px;line-height:22px;font-size:17.3px;color:#111;white-space:nowrap;letter-spacing:-0.9px;left:538.5px;width:600px;text-align:center;">OPEX</div>
<div style="left:881px;top:1318px;width:73px;height:30px;background:#ffffcc;border-radius:5px;"></div>
<div style="top:1322.5px;height:22px;line-height:22px;font-size:17.3px;color:#111;white-space:nowrap;letter-spacing:-0.9px;left:617.5px;width:600px;text-align:center;">CAPEX</div>
<div style="left:965px;top:1318px;width:48px;height:30px;background:#ffffcc;border-radius:5px;"></div>
<div style="top:1322.5px;height:22px;line-height:22px;font-size:17.3px;color:#111;white-space:nowrap;letter-spacing:-0.9px;left:689.0px;width:600px;text-align:center;">FTE</div>
<div style="left:1024px;top:1318px;width:128px;height:30px;background:#ffffcc;border-radius:5px;"></div>
<div style="top:1322.5px;height:22px;line-height:22px;font-size:17.3px;color:#111;white-space:nowrap;letter-spacing:-0.1px;left:788.0px;width:600px;text-align:center;">Credit Facility</div>
<div style="left:1163px;top:1318px;width:68px;height:30px;background:#ffffcc;border-radius:5px;"></div>
<div style="top:1322.5px;height:22px;line-height:22px;font-size:17.3px;color:#111;white-space:nowrap;letter-spacing:-0.3px;left:897.0px;width:600px;text-align:center;">Loan2</div>
<div style="left:1242px;top:1318px;width:68px;height:30px;background:#ffffcc;border-radius:5px;"></div>
<div style="top:1322.5px;height:22px;line-height:22px;font-size:17.3px;color:#111;white-space:nowrap;letter-spacing:-0.3px;left:976.0px;width:600px;text-align:center;">Loan3</div>
<div style="left:1321px;top:1318px;width:99px;height:30px;background:#ffffcc;border-radius:5px;"></div>
<div style="top:1322.5px;height:22px;line-height:22px;font-size:17.3px;color:#111;white-space:nowrap;letter-spacing:-0.3px;left:1070.5px;width:600px;text-align:center;">Cap Table</div>
<div style="left:1431px;top:1318px;width:126px;height:30px;background:#ffffcc;border-radius:5px;"></div>
<div style="top:1322.5px;height:22px;line-height:22px;font-size:17.3px;color:#111;white-space:nowrap;letter-spacing:-0.1px;left:1194.0px;width:600px;text-align:center;">Startup Costs</div>
<div style="left:1568px;top:1318px;width:139px;height:30px;background:#ffffcc;border-radius:5px;"></div>
<div style="top:1322.5px;height:22px;line-height:22px;font-size:17.3px;color:#111;white-space:nowrap;letter-spacing:-0.1px;left:1337.5px;width:600px;text-align:center;">Terminal Value</div>
<div style="left:1718px;top:1318px;width:138px;height:30px;background:#7030a0;border-radius:5px;"></div>
<div style="top:1322.5px;height:22px;line-height:22px;font-size:17.3px;color:#fff;white-space:nowrap;letter-spacing:-0.3px;left:1487.0px;width:600px;text-align:center;">Monthly Detail</div>
<div style="left:1867px;top:1318px;width:127px;height:30px;background:#7030a0;border-radius:5px;"></div>
<div style="top:1322.5px;height:22px;line-height:22px;font-size:17.3px;color:#fff;white-space:nowrap;letter-spacing:-0.3px;left:1630.5px;width:600px;text-align:center;">Annual Detail</div>
<div style="left:2006px;top:1312px;width:119px;height:36px;background:linear-gradient(#fff 18%,#eee5f5 55%,#ccb6e1 100%);border:1px solid #cfcfcf;border-top:none;border-radius:0 0 6px 6px;box-sizing:border-box;"></div>
<div style="top:1318.5px;height:23px;line-height:23px;font-size:17.6px;color:#1a1a1a;white-space:nowrap;letter-spacing:-0.45px;left:1765.5px;width:600px;text-align:center;text-shadow:0.45px 0 0 #1a1a1a;">DCF Analysis</div>
<div style="left:2015px;top:1342.5px;width:100px;height:2px;background:#107c41;"></div>
<div style="left:2137px;top:1318px;width:75px;height:30px;background:#7030a0;border-radius:5px;"></div>
<div style="top:1322.5px;height:22px;line-height:22px;font-size:17.3px;color:#fff;white-space:nowrap;letter-spacing:-0.3px;left:1874.5px;width:600px;text-align:center;">Visuals</div>
<div style="left:321px;top:1321px;width:1px;height:24px;background:#dadada;"></div>
<div style="left:534px;top:1321px;width:1px;height:24px;background:#dadada;"></div>
<div style="left:633px;top:1321px;width:1px;height:24px;background:#dadada;"></div>
<div style="left:687px;top:1321px;width:1px;height:24px;background:#dadada;"></div>
<div style="left:744px;top:1321px;width:1px;height:24px;background:#dadada;"></div>
<div style="left:801px;top:1321px;width:1px;height:24px;background:#dadada;"></div>
<div style="left:875px;top:1321px;width:1px;height:24px;background:#dadada;"></div>
<div style="left:959px;top:1321px;width:1px;height:24px;background:#dadada;"></div>
<div style="left:1018px;top:1321px;width:1px;height:24px;background:#dadada;"></div>
<div style="left:1157px;top:1321px;width:1px;height:24px;background:#dadada;"></div>
<div style="left:1236px;top:1321px;width:1px;height:24px;background:#dadada;"></div>
<div style="left:1315px;top:1321px;width:1px;height:24px;background:#dadada;"></div>
<div style="left:1425px;top:1321px;width:1px;height:24px;background:#dadada;"></div>
<div style="left:1562px;top:1321px;width:1px;height:24px;background:#dadada;"></div>
<div style="left:1712px;top:1321px;width:1px;height:24px;background:#dadada;"></div>
<div style="left:1861px;top:1321px;width:1px;height:24px;background:#dadada;"></div>
<div style="left:2000px;top:1321px;width:1px;height:24px;background:#dadada;"></div>
<div style="left:2131px;top:1321px;width:1px;height:24px;background:#dadada;"></div>
<div style="left:2217px;top:1321px;width:1px;height:24px;background:#dadada;"></div>
<div style="left:2223px;top:1318px;width:43px;height:30px;background:#7f7f7f;border-radius:5px 0 0 5px;overflow:hidden;"><div style="left:11px;top:3.5px;font-size:17.3px;line-height:23px;color:#fff;white-space:nowrap;letter-spacing:-0.3px">IS- M</div></div>
<div style="left:2278.5px;top:1330.5px;width:3.2px;height:3.2px;background:#444;border-radius:2px;"></div>
<div style="left:2283.3px;top:1330.5px;width:3.2px;height:3.2px;background:#444;border-radius:2px;"></div>
<div style="left:2288.1px;top:1330.5px;width:3.2px;height:3.2px;background:#444;border-radius:2px;"></div>
<svg style="left:2318px;top:1325px;" width="15" height="15" viewBox="0 0 15 15"><path d="M7.5 0.5V14.5M0.5 7.5H14.5" stroke="#333" stroke-width="1.5"/></svg>
<div style="left:2364.5px;top:1326.0px;width:3px;height:3px;background:#444;border-radius:1px;"></div>
<div style="left:2364.5px;top:1331.6px;width:3px;height:3px;background:#444;border-radius:1px;"></div>
<div style="left:2364.5px;top:1337.2px;width:3px;height:3px;background:#444;border-radius:1px;"></div>
<div style="left:2386px;top:1321px;width:150px;height:23px;background:#ededed;border-radius:11px;"></div>
<svg style="left:2391px;top:1326px;" width="9" height="12" viewBox="0 0 9 12"><path d="M8 1L1.5 6L8 11Z" fill="#6b6b6b"/></svg>
<svg style="left:2522px;top:1326px;" width="9" height="12" viewBox="0 0 9 12"><path d="M1 1L7.5 6L1 11Z" fill="#6b6b6b"/></svg>
<div style="left:2407px;top:1327px;width:106px;height:11px;background:#6b6b6b;border-radius:5.5px;"></div>
<div style="left:0px;top:1352px;width:2560px;height:28px;background:#f4f4f4;"></div>
<div style="left:0px;top:1352.5px;width:2560px;height:1px;background:#fdfdfd;"></div>
<div style="top:1358.5px;height:17px;line-height:17px;font-size:13px;color:#333;white-space:nowrap;letter-spacing:-0.1px;left:14px;">Ready</div>
<svg style="left:75px;top:1358px;" width="20" height="18" viewBox="0 0 20 18"><path d="M1 1H18V6M1 1V15H8" fill="none" stroke="#444" stroke-width="1.2"/><path d="M3.5 4.2H15.5M3.5 7.5H7.5M3.5 10.5H6.5" stroke="#444" stroke-width="1.1"/><circle cx="13" cy="11.5" r="4.6" fill="none" stroke="#444" stroke-width="1.2"/><circle cx="13" cy="11.5" r="2" fill="#444"/></svg>
<svg style="left:114px;top:1357px;" width="20" height="20" viewBox="0 0 20 20"><circle cx="9" cy="3.2" r="2.2" fill="none" stroke="#444" stroke-width="1.1"/><path d="M1.5 6.5C5 8 13 8 16.5 6.5M6.5 8V12L3.5 18.5M11.5 8V12L13 14.5M9 12V13.5" fill="none" stroke="#444" stroke-width="1.2" stroke-linecap="round"/><path d="M12 13.5L18 19.5M18 13.5L12 19.5" stroke="#444" stroke-width="1.2"/></svg>
<div style="top:1358.5px;height:17px;line-height:17px;font-size:12.7px;color:#222;white-space:nowrap;font-weight:700;letter-spacing:-0.05px;left:137px;">Accessibility: Investigate</div>
<div style="left:2188px;top:1354px;width:50px;height:26px;background:#e0e0e0;"></div>
<svg style="left:2204px;top:1358.5px;" width="17" height="17" viewBox="0 0 17 17"><rect x="0.7" y="0.7" width="15.6" height="15.6" fill="none" stroke="#444" stroke-width="1.3"/><path d="M5.9 0.7V16.3M11.1 0.7V16.3M0.7 5.9H16.3M0.7 11.1H16.3" stroke="#444" stroke-width="1.2"/></svg>
<svg style="left:2254px;top:1358.5px;" width="18" height="17" viewBox="0 0 18 17"><rect x="0.7" y="0.7" width="16.6" height="15.6" rx="1.5" fill="none" stroke="#444" stroke-width="1.3"/><rect x="4.5" y="4" width="9" height="9" fill="none" stroke="#444" stroke-width="1.1"/><path d="M6.3 6.7H11.7M6.3 8.6H11.7M6.3 10.5H11.7" stroke="#444" stroke-width=".9"/></svg>
<svg style="left:2304px;top:1358.5px;" width="18" height="17" viewBox="0 0 18 17"><path d="M0.7 0.7H17.3V16.3H0.7ZM6 0.7V8.5H12V0.7M0.7 8.5H6" fill="none" stroke="#444" stroke-width="1.3"/></svg>
<div style="left:2345px;top:1366.5px;width:9px;height:1px;background:#444;"></div>
<div style="left:2361px;top:1366.5px;width:125px;height:1px;background:#777;"></div>
<div style="left:2423px;top:1363px;width:1px;height:8px;background:#777;"></div>
<div style="left:2414px;top:1359.5px;width:5px;height:15px;background:#555;border-radius:1px;"></div>
<svg style="left:2491.5px;top:1362px;" width="10" height="10" viewBox="0 0 10 10"><path d="M5 0.5V9.5M0.5 5H9.5" stroke="#444" stroke-width="1.1"/></svg>
<div style="top:1359.5px;height:16px;line-height:16px;font-size:12.4px;color:#333;white-space:nowrap;letter-spacing:-0.1px;left:2230.0px;width:600px;text-align:center;">90%</div>
<div style="left:0px;top:1380px;width:2560px;height:60px;background:#cde3f1;border-top:1px solid #b9cbd8;box-sizing:border-box;"></div>
<svg style="left:26px;top:1390px;" width="32" height="36" viewBox="0 0 32 36"><defs><linearGradient id="sun" x1="0" y1="0" x2="1" y2="1"><stop offset="0" stop-color="#f9c22c"/><stop offset="1" stop-color="#ee7a12"/></linearGradient><linearGradient id="cl" x1="0" y1="0" x2="0" y2="1"><stop offset="0" stop-color="#f4f8ff"/><stop offset=".6" stop-color="#cfdcf5"/><stop offset="1" stop-color="#8fb0ea"/></linearGradient></defs><circle cx="14" cy="18.5" r="11.8" fill="url(#sun)"/><path d="M8.5 33.8C2.5 33.8 2.5 26.8 7.5 26C8.5 21.5 13 20.5 15 23.5C17 17.5 25 19 24.5 25C30 24.5 30.5 33.8 25 33.8Z" fill="url(#cl)"/></svg>
<div style="left:38px;top:1387.5px;width:20px;height:20px;background:#c42b1c;border-radius:10px;"></div>
<div style="top:1389.0px;height:17px;line-height:17px;font-size:13px;color:#fff;white-space:nowrap;left:-252.0px;width:600px;text-align:center;">2</div>
<div style="top:1390.7px;height:19px;line-height:19px;font-size:14.6px;color:#1f1f1f;white-space:nowrap;letter-spacing:-0.2px;left:64px;">33°F</div>
<div style="top:1410.7px;height:19px;line-height:19px;font-size:14.6px;color:#4e5560;white-space:nowrap;letter-spacing:0px;left:64px;">Partly sunny</div>
<svg style="left:932px;top:1396px;" width="29" height="29" viewBox="0 0 29 29"><defs><linearGradient id="wl" x1="0" y1="0" x2="1" y2="1"><stop offset="0" stop-color="#4cc7f7"/><stop offset="1" stop-color="#0a6fd0"/></linearGradient></defs><rect x="0" y="0" width="13.8" height="13.8" fill="url(#wl)"/><rect x="15.2" y="0" width="13.8" height="13.8" fill="#2a9df0"/><rect x="0" y="15.2" width="13.8" height="13.8" fill="#1c8be6"/><rect x="15.2" y="15.2" width="13.8" height="13.8" fill="#0d76d6"/></svg>
<div style="left:979px;top:1391px;width:274px;height:39px;background:#eef4f9;border:1px solid #c3d1dc;border-radius:20px;box-sizing:border-box;"></div>
<svg style="left:991px;top:1400px;" width="22" height="22" viewBox="0 0 22 22"><circle cx="9" cy="9" r="6.8" fill="none" stroke="#222" stroke-width="2"/><path d="M14 14L19.5 19.5" stroke="#222" stroke-width="2.2" stroke-linecap="round"/></svg>
<div style="top:1399.5px;height:22px;line-height:22px;font-size:16.8px;color:#4a4a4a;white-space:nowrap;letter-spacing:-0.1px;left:1024px;">Search</div>
<svg style="left:1204px;top:1395px;" width="24" height="31" viewBox="0 0 24 31"><defs><linearGradient id="rb1" x1="0" y1="0" x2="0" y2="1"><stop offset="0" stop-color="#6a1fb0"/><stop offset="1" stop-color="#b58af0"/></linearGradient><linearGradient id="rb2" x1="0" y1="0" x2="0" y2="1"><stop offset="0" stop-color="#a777ea"/><stop offset="1" stop-color="#7a2fc8"/></linearGradient></defs><path d="M11.5 3.2C7 3.2 4.8 7 7.8 11.2L20.8 28.8" fill="none" stroke="url(#rb1)" stroke-width="4.6"/><path d="M2.8 28.8L15.6 11.2C18.6 7 16 3.2 11.5 3.2" fill="none" stroke="url(#rb2)" stroke-width="4.6"/></svg>
<svg style="left:1267px;top:1395px;" width="32" height="30" viewBox="0 0 32 30"><rect x="9" y="1" width="22" height="20" rx="2" fill="#f4f4f4"/><rect x="1" y="8" width="22" height="20" rx="2" fill="#2b2b2b"/><rect x="9" y="8" width="14" height="13" fill="#9a9a9a"/></svg>
<svg style="left:1322px;top:1396px;" width="32" height="29" viewBox="0 0 32 29"><path d="M1 3Q1 1.5 2.5 1.5H11L14 4.5H29.5Q31 4.5 31 6V26Q31 27.5 29.5 27.5H2.5Q1 27.5 1 26Z" fill="#f0b429"/><path d="M1 8H31V26Q31 27.5 29.5 27.5H2.5Q1 27.5 1 26Z" fill="#fcd34d"/><path d="M6 27.5V22Q6 20 8 20H24Q26 20 26 22V27.5Z" fill="#1a73d8"/><rect x="11" y="23" width="10" height="1.8" rx=".9" fill="#0b4fa0"/></svg>
<svg style="left:1378px;top:1395px;" width="30" height="30" viewBox="0 0 30 30"><ellipse cx="15" cy="15" rx="14.3" ry="14.5" fill="#e0182d"/><ellipse cx="15" cy="15" rx="6.2" ry="10.5" fill="#cde3f1"/></svg>
<svg style="left:1432px;top:1388px;" width="38" height="38" viewBox="0 0 38 38"><circle cx="16" cy="23" r="14.7" fill="#fff"/><path d="M16 8.3A14.7 14.7 0 0 1 28.7 15.6H16A7.4 7.4 0 0 0 9.6 19.3L3.3 15.6A14.7 14.7 0 0 1 16 8.3Z" fill="#ea4335"/><path d="M28.7 15.6A14.7 14.7 0 0 1 16 37.7L22.4 26.7A7.4 7.4 0 0 0 22.4 19.3Z" fill="#fbbc04"/><path d="M3.3 15.6L9.6 26.7A7.4 7.4 0 0 0 22.4 26.7L16 37.7A14.7 14.7 0 0 1 3.3 15.6Z" fill="#34a853"/><circle cx="16" cy="23" r="6.8" fill="#fff"/><circle cx="16" cy="23" r="5.3" fill="#4285f4"/><circle cx="27" cy="10.5" r="10" fill="#b5b5b5"/><rect x="20.5" y="9.6" width="13" height="1.8" fill="#d9d9d9"/></svg>
<svg style="left:1487px;top:1394px;" width="32" height="32" viewBox="0 0 32 32"><rect x="1" y="1" width="21" height="21" rx="3" fill="#eef1f4"/><rect x="4.5" y="4.5" width="13" height="13" fill="none" stroke="#d13a26" stroke-width="2.2" stroke-dasharray="3 2"/><path d="M14 10L19 27M8 16.5L26 18.5" stroke="#8c96a0" stroke-width="2.2"/><circle cx="27.5" cy="17" r="2.8" fill="none" stroke="#2b88d8" stroke-width="1.8"/><circle cx="17" cy="28" r="2.8" fill="none" stroke="#2b88d8" stroke-width="1.8"/></svg>
<svg style="left:1546px;top:1394px;" width="24" height="31" viewBox="0 0 24 31"><rect x="1" y="3" width="22" height="26" rx="2" fill="#3fb6e8"/><rect x="1" y="26" width="22" height="4" rx="1.5" fill="#a8532a"/><path d="M5 10.5H19M5 14.5H19M5 18.5H19M5 22.5H14" stroke="#0e6a9a" stroke-width="1.6"/><circle cx="5" cy="2.5" r="1.4" fill="#1b6fa3"/><circle cx="9.7" cy="2.5" r="1.4" fill="#1b6fa3"/><circle cx="14.3" cy="2.5" r="1.4" fill="#1b6fa3"/><circle cx="19" cy="2.5" r="1.4" fill="#1b6fa3"/></svg>
<svg style="left:1597px;top:1396px;" width="31" height="28" viewBox="0 0 31 28"><rect x="8" y="0.5" width="22.5" height="27" rx="2" fill="#21a366"/><rect x="19" y="0.5" width="11.5" height="7" fill="#33c481"/><rect x="8" y="7.5" width="11" height="6.7" fill="#107c41"/><rect x="19" y="14.2" width="11.5" height="6.7" fill="#107c41"/><rect x="8" y="14.2" width="11" height="6.7" fill="#185c37"/><rect x="8" y="20.9" width="22.5" height="6.6" fill="#185c37"/><rect x="0.5" y="6" width="16" height="16" rx="1.5" fill="#107c41"/><path d="M5 9.8L12 18.2M12 9.8L5 18.2" stroke="#fff" stroke-width="2"/></svg>
<div style="left:1333.5px;top:1430.5px;width:8px;height:3px;background:#7d8790;border-radius:1.5px;"></div>
<div style="left:1388.5px;top:1430.5px;width:8px;height:3px;background:#7d8790;border-radius:1.5px;"></div>
<div style="left:1443.5px;top:1430.5px;width:8px;height:3px;background:#7d8790;border-radius:1.5px;"></div>
<div style="left:1553.5px;top:1430.5px;width:8px;height:3px;background:#7d8790;border-radius:1.5px;"></div>
<div style="left:1608.5px;top:1430.5px;width:8px;height:3px;background:#7d8790;border-radius:1.5px;"></div>
<svg style="left:2358px;top:1404px;" width="16" height="10" viewBox="0 0 16 10"><path d="M1.5 8.5L8 2L14.5 8.5" fill="none" stroke="#1f1f1f" stroke-width="1.7"/></svg>
<svg style="left:2395.5px;top:1399.8px;" width="22" height="22" viewBox="0 0 22 22"><rect x="1" y="3" width="15" height="11.5" rx="1" fill="none" stroke="#1f1f1f" stroke-width="1.4"/><path d="M8.5 14.5V19M4.5 19.5H14" stroke="#1f1f1f" stroke-width="1.4"/><rect x="14.8" y="1" width="5" height="6.5" rx="1.2" fill="#cde3f1" stroke="#1f1f1f" stroke-width="1.3"/><path d="M17.3 7.5V19" stroke="#1f1f1f" stroke-width="1.3"/></svg>
<svg style="left:2425px;top:1401.3px;" width="24" height="18" viewBox="0 0 24 18"><path d="M1.5 6.5H5L9.5 2.5V15.5L5 11.5H1.5Z" fill="none" stroke="#1f1f1f" stroke-width="1.3" stroke-linejoin="round"/><path d="M12 6.5C13 8 13 10 12 11.5" fill="none" stroke="#1f1f1f" stroke-width="1.2"/><path d="M14.5 4.5C16.5 7 16.5 11 14.5 13.5" fill="none" stroke="#8fa0ad" stroke-width="1.1"/><path d="M17 2.5C20 6 20 12 17 15.5" fill="none" stroke="#a9b8c4" stroke-width="1.1"/></svg>
<div style="top:1390.0px;height:20px;line-height:20px;font-size:15px;color:#1f1f1f;white-space:nowrap;letter-spacing:0px;left:1936px;width:600px;text-align:right;">10:09 AM</div>
<div style="top:1410.2px;height:20px;line-height:20px;font-size:15px;color:#1f1f1f;white-space:nowrap;letter-spacing:0.1px;left:1936px;width:600px;text-align:right;">3/26/2025</div>
</body></html>
